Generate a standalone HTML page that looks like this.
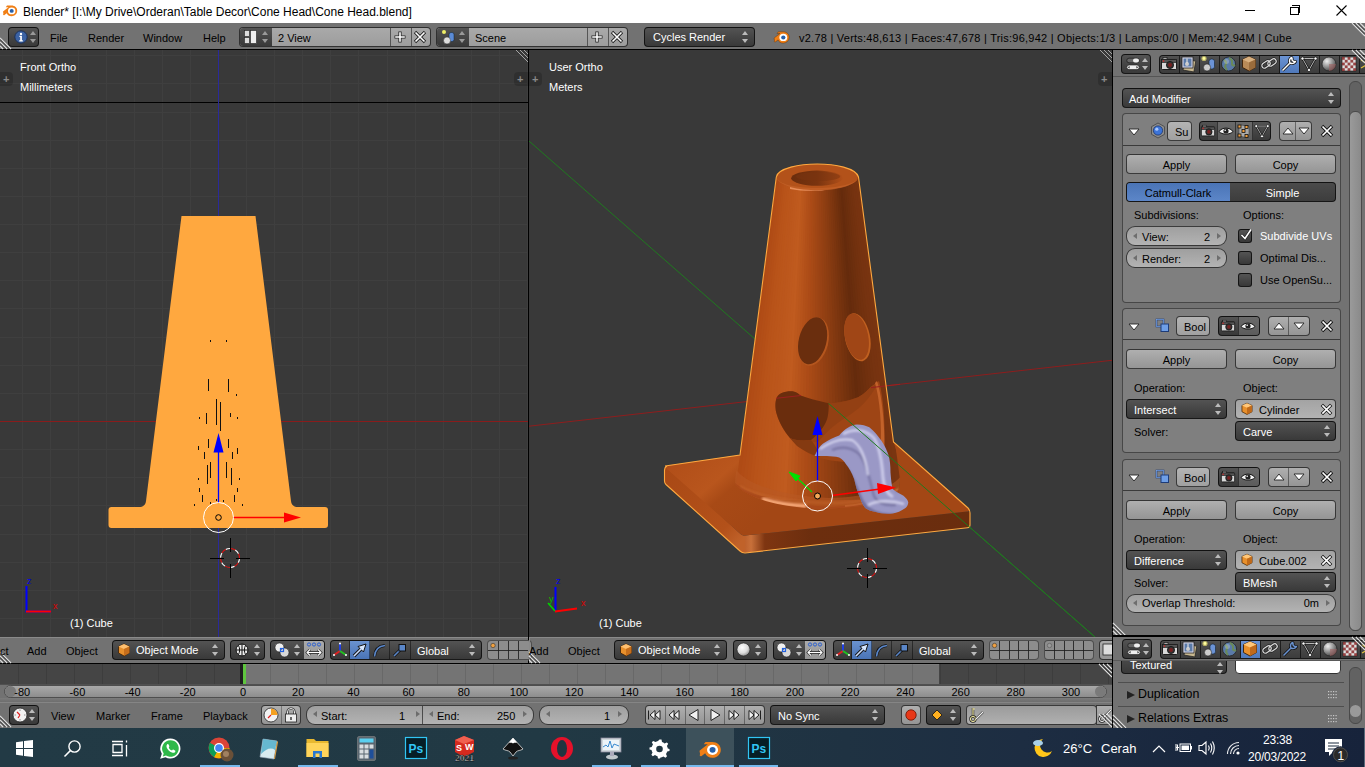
<!DOCTYPE html>
<html><head><meta charset="utf-8">
<style>
*{margin:0;padding:0;box-sizing:border-box}
html,body{width:1365px;height:767px;overflow:hidden;background:#393939;font-family:"Liberation Sans",sans-serif;font-size:11px;color:#000;line-height:1}
.a{position:absolute}
.t{position:absolute;white-space:nowrap;line-height:13px}
.w{color:#fff}
.hdr{position:absolute;background:#727272}
.reg{position:absolute;border:1px solid rgba(20,20,20,.75);border-radius:4px;background:linear-gradient(#afafaf,#959595);text-align:center;line-height:21px;white-space:nowrap}
.menu{position:absolute;border:1px solid rgba(0,0,0,.7);border-radius:4px;background:linear-gradient(#535353,#393939);color:#fff;line-height:19px;white-space:nowrap;padding-left:6px}
.num{position:absolute;border:1px solid rgba(20,20,20,.75);border-radius:9px;background:linear-gradient(#9f9f9f,#b3b3b3);line-height:21px;white-space:nowrap}
.txt{position:absolute;border:1px solid rgba(20,20,20,.75);border-radius:4px;background:linear-gradient(#9b9b9b,#b0b0b0);line-height:21px;white-space:nowrap}
.grp{position:absolute;border:1px solid rgba(0,0,0,.7);border-radius:4px;background:linear-gradient(#535353,#393939);overflow:hidden}
.box{position:absolute;border:1px solid rgba(25,25,25,.55);border-radius:4px;background:#7f7f7f}
.ud{position:absolute;width:7px;height:12px}
.ud:before{content:"";position:absolute;left:0;top:0;border-left:3.5px solid transparent;border-right:3.5px solid transparent;border-bottom:4px solid currentColor}
.ud:after{content:"";position:absolute;left:0;bottom:0;border-left:3.5px solid transparent;border-right:3.5px solid transparent;border-top:4px solid currentColor}
.lt{position:absolute;width:0;height:0;border-top:3.5px solid transparent;border-bottom:3.5px solid transparent;border-right:4px solid rgba(0,0,0,.35)}
.rt{position:absolute;width:0;height:0;border-top:3.5px solid transparent;border-bottom:3.5px solid transparent;border-left:4px solid rgba(0,0,0,.35)}
.sep{position:absolute;width:1px;background:rgba(0,0,0,.45)}
.cb{position:absolute;width:14px;height:14px;border:1px solid rgba(0,0,0,.7);border-radius:3px;background:linear-gradient(#545454,#383838)}
svg{position:absolute;overflow:visible}
</style></head><body>
<!-- title bar -->
<div class="a" style="left:0;top:0;width:1365px;height:23px;background:#fff"></div>
<svg style="left:2px;top:3px" width="16" height="14" viewBox="0 0 16 14">
<path d="M1 8.5 L6.5 4.2 L3.8 4.2 L5 2.6 L9.5 2.6 C12.8 2.6 15.2 4.8 15.2 7.8 C15.2 10.9 12.7 13.2 9.6 13.2 C7.2 13.2 5.4 11.9 4.8 10.2 L2.4 12 C1.6 12.6 0.6 11.5 1.4 10.8 Z" fill="#f07f16"/>
<ellipse cx="9.7" cy="7.9" rx="3.7" ry="3.4" fill="#fff"/><ellipse cx="9.7" cy="7.9" rx="2" ry="1.9" fill="#275fa8"/>
</svg>
<div class="t" style="left:23px;top:5px;font-size:12px;line-height:14px;color:#000">Blender* [I:\My Drive\Orderan\Table Decor\Cone Head\Cone Head.blend]</div>
<div class="a" style="left:1245px;top:10px;width:10px;height:1px;background:#000"></div>
<div class="a" style="left:1292px;top:5px;width:8px;height:8px;border:1px solid #000;border-left:none;border-bottom:none"></div>
<div class="a" style="left:1290px;top:7px;width:9px;height:8px;border:1px solid #000;background:#fff"></div>
<svg style="left:1336px;top:5px" width="11" height="11"><path d="M0.5 0.5L10.5 10.5M10.5 0.5L0.5 10.5" stroke="#000" stroke-width="1.1"/></svg>
<!-- info header -->
<div class="hdr" style="left:0;top:23px;width:1365px;height:26px"></div>
<div class="a" style="left:0;top:49px;width:1365px;height:1px;background:#000"></div>
<div class="grp" style="left:8px;top:27px;width:31px;height:20px"></div>
<svg style="left:14px;top:30px" width="14" height="14" viewBox="0 0 14 14"><circle cx="7" cy="7" r="6.2" fill="#3b62a3" stroke="#1c2f55" stroke-width="1"/><circle cx="7" cy="3.9" r="1.2" fill="#fff"/><path d="M5.4 5.8h2.5v4.5h1v1.2H5.2v-1.2h1v-3.3h-.8z" fill="#fff"/></svg>
<div class="ud" style="left:30px;top:31px;color:#9a9a9a"></div>
<div class="t" style="left:50px;top:32px">File</div>
<div class="t" style="left:88px;top:32px">Render</div>
<div class="t" style="left:143px;top:32px">Window</div>
<div class="t" style="left:203px;top:32px">Help</div>
<div class="grp" style="left:239px;top:27px;width:192px;height:20px;background:linear-gradient(#a9a9a9,#9d9d9d)">
 <div class="a" style="left:0;top:0;width:32px;height:18px;background:linear-gradient(#535353,#393939)"></div>
 <div class="a" style="left:150px;top:0;width:1px;height:18px;background:#555"></div>
 <div class="a" style="left:171px;top:0;width:1px;height:18px;background:#555"></div>
</div>
<svg style="left:244px;top:30px" width="13" height="14" viewBox="0 0 13 14"><rect x="0.5" y="0.5" width="5" height="6" fill="#ddd" stroke="#222" stroke-width=".6"/><rect x="0.5" y="7.5" width="5" height="6" fill="#ddd" stroke="#222" stroke-width=".6"/><rect x="6.5" y="0.5" width="6" height="13" fill="#eee" stroke="#222" stroke-width=".6"/></svg>
<div class="ud" style="left:262px;top:31px;color:#9a9a9a"></div>
<div class="t" style="left:278px;top:32px">2 View</div>
<svg style="left:393px;top:30px" width="14" height="14"><path d="M7 1.5V12.5M1.5 7H12.5" stroke="#222" stroke-width="3.2"/><path d="M7 2.2V11.8M2.2 7H11.8" stroke="#fff" stroke-width="1.6"/></svg>
<svg style="left:413px;top:30px" width="14" height="14"><path d="M2 2L12 12M12 2L2 12" stroke="#222" stroke-width="3.2"/><path d="M2.5 2.5L11.5 11.5M11.5 2.5L2.5 11.5" stroke="#fff" stroke-width="1.6"/></svg>
<div class="grp" style="left:436px;top:27px;width:192px;height:20px;background:linear-gradient(#a9a9a9,#9d9d9d)">
 <div class="a" style="left:0;top:0;width:32px;height:18px;background:linear-gradient(#535353,#393939)"></div>
 <div class="a" style="left:150px;top:0;width:1px;height:18px;background:#555"></div>
 <div class="a" style="left:171px;top:0;width:1px;height:18px;background:#555"></div>
</div>
<svg style="left:441px;top:29px" width="15" height="16" viewBox="0 0 15 16"><circle cx="3" cy="3" r="2" fill="#ee6"/><rect x="8" y="3.5" width="5" height="9" rx="2" fill="#5b8bd6" stroke="#123" stroke-width=".5"/><circle cx="6" cy="11.5" r="3.5" fill="#ddd" stroke="#333" stroke-width=".5"/></svg>
<div class="ud" style="left:459px;top:31px;color:#9a9a9a"></div>
<div class="t" style="left:475px;top:32px">Scene</div>
<svg style="left:590px;top:30px" width="14" height="14"><path d="M7 1.5V12.5M1.5 7H12.5" stroke="#222" stroke-width="3.2"/><path d="M7 2.2V11.8M2.2 7H11.8" stroke="#fff" stroke-width="1.6"/></svg>
<svg style="left:610px;top:30px" width="14" height="14"><path d="M2 2L12 12M12 2L2 12" stroke="#222" stroke-width="3.2"/><path d="M2.5 2.5L11.5 11.5M11.5 2.5L2.5 11.5" stroke="#fff" stroke-width="1.6"/></svg>
<div class="menu" style="left:644px;top:27px;width:111px;height:20px;padding-left:8px">Cycles Render<div class="ud" style="left:97px;top:3px;color:#bbb"></div></div>
<svg style="left:773px;top:29px" width="17" height="15" viewBox="0 0 16 14">
<path d="M1 8.5 L6.5 4.2 L3.8 4.2 L5 2.6 L9.5 2.6 C12.8 2.6 15.2 4.8 15.2 7.8 C15.2 10.9 12.7 13.2 9.6 13.2 C7.2 13.2 5.4 11.9 4.8 10.2 L2.4 12 C1.6 12.6 0.6 11.5 1.4 10.8 Z" fill="#f07f16" stroke="#5a2a00" stroke-width=".4"/>
<ellipse cx="9.7" cy="7.9" rx="3.7" ry="3.4" fill="#fff"/><ellipse cx="9.7" cy="7.9" rx="2" ry="1.9" fill="#275fa8"/>
</svg>
<div class="t" style="left:799px;top:32px;letter-spacing:.24px">v2.78 | Verts:48,613 | Faces:47,678 | Tris:96,942 | Objects:1/3 | Lamps:0/0 | Mem:42.94M | Cube</div>
<svg style="left:0;top:37px" width="13" height="12"><path d="M0 1L11 12M0 5L7 12M0 9L3 12" stroke="#ddd" stroke-width="1.2"/><path d="M0 2.5L9.5 12M0 6.5L5.5 12" stroke="#222" stroke-width=".8"/></svg>
<svg style="left:1352px;top:23px" width="13" height="13"><path d="M0 0L13 13M4 0L13 9M8 0L13 5" stroke="#ddd" stroke-width="1.2"/><path d="M1.5 0L13 11.5M5.5 0L13 7.5" stroke="#222" stroke-width=".8"/></svg>
<!-- left viewport -->
<div class="a" style="left:0;top:50px;width:528px;height:587px;overflow:hidden;background:#393939">
<svg style="left:0;top:-50px" width="528" height="637" viewBox="0 0 528 637">
<path d="M22.5 50V637M50.5 50V637M78.5 50V637M106.5 50V637M134.5 50V637M162.5 50V637M190.5 50V637M246.5 50V637M274.5 50V637M302.5 50V637M330.5 50V637M358.5 50V637M387.5 50V637M415.5 50V637M443.5 50V637M471.5 50V637M499.5 50V637M527.5 50V637M0 55.5H528M0 83.5H528M0 112.5H528M0 140.5H528M0 168.5H528M0 196.5H528M0 224.5H528M0 252.5H528M0 280.5H528M0 308.5H528M0 337.5H528M0 365.5H528M0 393.5H528M0 449.5H528M0 477.5H528M0 505.5H528M0 534.5H528M0 562.5H528M0 590.5H528M0 618.5H528" stroke="#3f3f3f" stroke-width="1" fill="none"/>
<path d="M0 102.5H528" stroke="#000" stroke-width="1.2"/>
<path d="M0 421.5H528" stroke="#8a1c1c" stroke-width="1"/>
<path d="M218.5 50V637" stroke="#2a2a9a" stroke-width="1"/>
<path d="M181.5 216H255.5L291 501C291.5 505 294 507 298 507H325C327 507 328 508 328 510V525C328 527 327 528 325 528H111.5C109.5 528 108.5 527 108.5 525V510C108.5 508 109.5 507 111.5 507H139C143 507 145.5 505 146 501Z" fill="#ffa83f"/>
<path d="M218.5 452V503" stroke="#0000ff" stroke-width="1.3"/>
<path d="M213.5 452.5H223.5L218.5 433Z" fill="#0000ff"/>
<path d="M233 517.5H285" stroke="#ff0000" stroke-width="1.3"/>
<path d="M284 512.5V522.5L301 517.5Z" fill="#ff0000"/>
<circle cx="218.5" cy="517.5" r="15" fill="none" stroke="#fff" stroke-width="1"/>
<circle cx="218.5" cy="517.5" r="2.8" fill="none" stroke="#000" stroke-width="1"/>
<g stroke="#111" stroke-width="1"><path d="M210.5 340v2M226.5 340v2M208.5 379v12M228.5 379v13M236.5 394v2M216.5 399v26M220.5 402v29M206.5 413v11M230.5 413v4M199.5 417v2M237.5 417v2M208.5 439v9M228.5 439v9M198.5 446v4M237.5 448v6M204.5 452v7M232.5 452v7M207.5 465v19M210.5 462v16M226.5 462v16M231.5 468v17M198.5 478v2M239.5 478v2M199.5 488v4M237.5 488v4M202.5 495v7M234.5 495v7M194.5 504v2M210.5 502v2M216.5 499v2M223.5 500v2M242.5 504v2"/></g>
<g>
<circle cx="230" cy="558" r="9.5" fill="none" stroke="#fff" stroke-width="1.1" stroke-dasharray="5 5"/>
<circle cx="230" cy="558" r="9.5" fill="none" stroke="#e01010" stroke-width="1.1" stroke-dasharray="5 5" stroke-dashoffset="5"/>
<path d="M210 558.5H224M236 558.5H250M230.5 538V552M230.5 564V578" stroke="#000" stroke-width="1"/>
</g>
<path d="M26.5 586V611.5H51" stroke="#0000ff" stroke-width="2" fill="none"/>
<path d="M26 611.5H51" stroke="#ff0000" stroke-width="2"/>
<text x="27" y="584" font-size="9" fill="#0000ee" font-family="Liberation Sans">z</text>
<text x="53" y="609" font-size="9" fill="#e00000" font-family="Liberation Sans">x</text>
<path d="M516 50L528 62M520 50L528 58M524 50L528 54" stroke="#fff" stroke-opacity=".55" stroke-width="1"/>
</svg>
<div class="a" style="left:514px;top:22px;width:14px;height:14px;background:rgba(0,0,0,.16);border-radius:4px 0 0 4px"></div>
<div class="t" style="left:517px;top:23px;color:#8a8a8a;font-size:11px;font-weight:bold">+</div>
<div class="a" style="left:0;top:22px;width:13px;height:14px;background:rgba(0,0,0,.16);border-radius:0 4px 4px 0"></div>
<div class="t" style="left:3px;top:23px;color:#8a8a8a;font-size:11px;font-weight:bold">+</div>
<div class="t w" style="left:20px;top:11px">Front Ortho</div>
<div class="t w" style="left:20px;top:31px">Millimeters</div>
<div class="t w" style="left:70px;top:567px">(1) Cube</div>
</div>
<div class="a" style="left:528px;top:50px;width:1px;height:587px;background:#000"></div>
<!-- right viewport -->
<div class="a" style="left:529px;top:50px;width:583px;height:587px;overflow:hidden;background:#393939">
<svg style="left:-529px;top:-50px" width="1112" height="637" viewBox="0 0 1112 637">
<defs>
<linearGradient id="bt" gradientUnits="userSpaceOnUse" x1="690" y1="440" x2="760" y2="520">
<stop offset="0" stop-color="#b04d18"/><stop offset=".45" stop-color="#b9561d"/><stop offset=".6" stop-color="#a84a16"/><stop offset="1" stop-color="#a34715"/>
</linearGradient>
<linearGradient id="bf" gradientUnits="userSpaceOnUse" x1="742" y1="0" x2="970" y2="0">
<stop offset="0" stop-color="#b85a26"/><stop offset=".04" stop-color="#c8703a"/><stop offset=".1" stop-color="#7e3511"/><stop offset=".3" stop-color="#6c2e0e"/><stop offset="1" stop-color="#6a2d0e"/>
</linearGradient>
<linearGradient id="bl" gradientUnits="userSpaceOnUse" x1="665" y1="470" x2="742" y2="540">
<stop offset="0" stop-color="#a94915"/><stop offset=".8" stop-color="#b3511a"/><stop offset="1" stop-color="#c0622a"/>
</linearGradient>
<linearGradient id="hole" gradientUnits="userSpaceOnUse" x1="792" y1="0" x2="843" y2="0">
<stop offset="0" stop-color="#6a2d0d"/><stop offset=".5" stop-color="#7a340f"/><stop offset="1" stop-color="#b25019"/>
</linearGradient>
<linearGradient id="tg" gradientUnits="userSpaceOnUse" x1="820" y1="425" x2="905" y2="515">
<stop offset="0" stop-color="#a6a4d4"/><stop offset=".5" stop-color="#9390c2"/><stop offset="1" stop-color="#8784b6"/>
</linearGradient>
<filter id="bl1" x="-20%" y="-20%" width="140%" height="140%"><feGaussianBlur stdDeviation="1.1"/></filter>
<clipPath id="cone"><path d="M776.3 177L740 455C737 465 735 475 735 484C745 496 770 505 805 508C830 510 865 508 895 498C902 490 902 465 893.5 442L858.5 177Z"/></clipPath>
</defs>
<path d="M529 426.2L1112 360.3" stroke="#8e1d1d" stroke-width="1"/>
<path d="M529 141L1095 637" stroke="#1f7a1f" stroke-width="1"/>
<!-- base slab -->

<path d="M667 466C665 467 664.5 468 664.5 470V481C664.5 482.5 665 483.5 666 484.5L740 551C741.5 552.5 743 553 745 552.8L745 535.5C743 535.7 741.5 535 740.5 534Z" fill="url(#bl)"/>
<path d="M745 535.5L967 511.5C969 511.3 970 512 970 514V525C970 526.5 969 527.3 967.5 527.5L745 552.8Z" fill="url(#bf)"/>
<path d="M668 465.5L740 455L893.5 442L968 508C970 510 970 511 967 511.5L745 535.5C743 535.7 741.5 535 740.5 534L667 469C666 468 666.5 466 668 465.5Z" fill="url(#bt)"/>

<!-- cone body -->
<g clip-path="url(#cone)">
<path d="M776.30 177L779.51 177L739.10 500L734.12 500Z" fill="rgb(175, 75, 21)"/>
<path d="M778.01 177L781.22 177L742.58 500L737.60 500Z" fill="rgb(177, 76, 22)"/>
<path d="M779.72 177L782.94 177L746.06 500L741.08 500Z" fill="rgb(178, 78, 23)"/>
<path d="M781.44 177L784.65 177L749.54 500L744.56 500Z" fill="rgb(180, 79, 23)"/>
<path d="M783.15 177L786.36 177L753.02 500L748.04 500Z" fill="rgb(182, 81, 24)"/>
<path d="M784.86 177L788.07 177L756.50 500L751.52 500Z" fill="rgb(184, 83, 25)"/>
<path d="M786.57 177L789.79 177L759.98 500L755.00 500Z" fill="rgb(185, 84, 26)"/>
<path d="M788.29 177L791.50 177L763.46 500L758.48 500Z" fill="rgb(186, 85, 26)"/>
<path d="M790.00 177L793.21 177L766.94 500L761.96 500Z" fill="rgb(187, 86, 27)"/>
<path d="M791.71 177L794.92 177L770.42 500L765.44 500Z" fill="rgb(187, 86, 28)"/>
<path d="M793.42 177L796.64 177L773.90 500L768.92 500Z" fill="rgb(188, 87, 28)"/>
<path d="M795.14 177L798.35 177L777.38 500L772.40 500Z" fill="rgb(189, 88, 29)"/>
<path d="M796.85 177L800.06 177L780.86 500L775.88 500Z" fill="rgb(190, 89, 30)"/>
<path d="M798.56 177L801.77 177L784.34 500L779.36 500Z" fill="rgb(191, 90, 30)"/>
<path d="M800.27 177L803.49 177L787.82 500L782.84 500Z" fill="rgb(192, 91, 31)"/>
<path d="M801.99 177L805.20 177L791.30 500L786.32 500Z" fill="rgb(188, 88, 29)"/>
<path d="M803.70 177L806.91 177L794.78 500L789.80 500Z" fill="rgb(185, 86, 28)"/>
<path d="M805.41 177L808.62 177L798.26 500L793.28 500Z" fill="rgb(182, 83, 27)"/>
<path d="M807.12 177L810.34 177L801.74 500L796.76 500Z" fill="rgb(178, 80, 25)"/>
<path d="M808.84 177L812.05 177L805.22 500L800.24 500Z" fill="rgb(175, 78, 24)"/>
<path d="M810.55 177L813.76 177L808.70 500L803.72 500Z" fill="rgb(172, 75, 23)"/>
<path d="M812.26 177L815.48 177L812.18 500L807.20 500Z" fill="rgb(168, 74, 22)"/>
<path d="M813.98 177L817.19 177L815.66 500L810.68 500Z" fill="rgb(164, 72, 21)"/>
<path d="M815.69 177L818.90 177L819.14 500L814.16 500Z" fill="rgb(160, 70, 21)"/>
<path d="M817.40 177L820.61 177L822.62 500L817.64 500Z" fill="rgb(156, 68, 20)"/>
<path d="M819.11 177L822.32 177L826.10 500L821.12 500Z" fill="rgb(152, 66, 20)"/>
<path d="M820.82 177L824.04 177L829.58 500L824.60 500Z" fill="rgb(148, 64, 19)"/>
<path d="M822.54 177L825.75 177L833.06 500L828.08 500Z" fill="rgb(144, 63, 18)"/>
<path d="M824.25 177L827.46 177L836.54 500L831.56 500Z" fill="rgb(140, 61, 18)"/>
<path d="M825.96 177L829.17 177L840.02 500L835.04 500Z" fill="rgb(136, 59, 17)"/>
<path d="M827.67 177L830.89 177L843.50 500L838.52 500Z" fill="rgb(131, 57, 16)"/>
<path d="M829.39 177L832.60 177L846.98 500L842.00 500Z" fill="rgb(127, 55, 16)"/>
<path d="M831.10 177L834.31 177L850.46 500L845.48 500Z" fill="rgb(123, 53, 15)"/>
<path d="M832.81 177L836.02 177L853.94 500L848.96 500Z" fill="rgb(118, 51, 14)"/>
<path d="M834.52 177L837.74 177L857.42 500L852.44 500Z" fill="rgb(114, 49, 14)"/>
<path d="M836.24 177L839.45 177L860.90 500L855.92 500Z" fill="rgb(109, 47, 13)"/>
<path d="M837.95 177L841.16 177L864.38 500L859.40 500Z" fill="rgb(105, 45, 13)"/>
<path d="M839.66 177L842.88 177L867.86 500L862.88 500Z" fill="rgb(101, 43, 12)"/>
<path d="M841.38 177L844.59 177L871.34 500L866.36 500Z" fill="rgb(104, 44, 13)"/>
<path d="M843.09 177L846.30 177L874.82 500L869.84 500Z" fill="rgb(106, 46, 13)"/>
<path d="M844.80 177L848.01 177L878.30 500L873.32 500Z" fill="rgb(109, 47, 14)"/>
<path d="M846.51 177L849.73 177L881.78 500L876.80 500Z" fill="rgb(112, 48, 14)"/>
<path d="M848.23 177L851.44 177L885.26 500L880.28 500Z" fill="rgb(114, 49, 15)"/>
<path d="M849.94 177L853.15 177L888.74 500L883.76 500Z" fill="rgb(116, 50, 15)"/>
<path d="M851.65 177L854.86 177L892.22 500L887.24 500Z" fill="rgb(118, 51, 16)"/>
<path d="M853.36 177L856.58 177L895.70 500L890.72 500Z" fill="rgb(119, 51, 16)"/>
<path d="M855.08 177L858.29 177L899.18 500L894.20 500Z" fill="rgb(120, 52, 16)"/>
<path d="M856.79 177L860.00 177L902.66 500L897.68 500Z" fill="rgb(121, 53, 17)"/>
<path d="M735 468C745 485 785 496 830 498C865 497 890 490 902 475L905 515L735 515Z" fill="#b85a24" opacity=".55"/>
<path d="M735 483C750 496 790 505 830 507C862 506 888 499 902 488L902 515L735 515Z" fill="#a9491a"/>
<path d="M740 486C755 496 790 502 830 503C860 503 885 497 900 488" stroke="#c86a30" stroke-width="2" fill="none" opacity=".6" filter="url(#bl1)"/>
<path d="M762 499C775 503 792 505.5 806 506" stroke="#f6a877" stroke-width="4" fill="none" filter="url(#bl1)"/>
<path d="M845 506C868 504 886 498 898 489" stroke="#c86a34" stroke-width="2" fill="none" opacity=".6"/>
</g>
<!-- top -->
<ellipse cx="817.2" cy="177" rx="41" ry="13" fill="#b3521a"/>
<path d="M776.3 177C778 186 800 190.5 817.2 190.5C835 190.5 856 186 858.5 177C858 183 840 188 817 188C795 188 778 184 776.3 177Z" fill="#c8652c" opacity=".6"/>
<path d="M790 187C800 190 815 190.5 825 190C815 191.5 800 191 790 189Z" fill="#f09a68" opacity=".8"/>
<ellipse cx="817" cy="178.2" rx="25.8" ry="7.6" fill="url(#hole)"/>
<ellipse cx="818" cy="176.5" rx="22" ry="4.5" fill="#7a340f" opacity=".5"/>
<!-- eyes -->
<ellipse cx="813.5" cy="341.6" rx="14.7" ry="24.7" transform="rotate(14 813.5 341.6)" fill="#b4561e"/>
<ellipse cx="812.6" cy="340.8" rx="13.8" ry="24" transform="rotate(14 812.6 340.8)" fill="#6a2e0e"/>
<ellipse cx="857.5" cy="337.3" rx="12.5" ry="24.4" transform="rotate(-12 857.5 337.3)" fill="#c06020"/>
<ellipse cx="856.6" cy="336.6" rx="11.6" ry="23.6" transform="rotate(-12 856.6 336.6)" fill="#a04616"/>
<!-- mouth -->
<path d="M776.5 398.5C778 393 785 391 793.5 391.4C797 392 799 394 800.5 395.5C808 398 817 400.8 828.6 403.2C836 403.5 848 401 858 397.3C864 394 868 390 870.9 386.7L879 380.9C883 395 886 425 884 450C878 460 860 462 845 462C830 461 822 459 814.6 456.5C805 451 797 446 793.5 441.9C786 434 780 425 777 415C775 409 775 402 776.5 398.5Z" fill="#9e4515"/>
<path d="M828.6 403.2C836 403.5 848 401 858 397.3C864 394 868 390 879 380.9C870 400 858 410 845 418C835 424 826 432 818 442L795 443C788 435 782 425 778 415Z" fill="#8a3c12" opacity=".55"/>
<path d="M776.5 398.5C778 393 785 391 793.5 391.4C797 392 799 394 800.5 395.5C808 398 817 400.8 828.6 403.2C829 410 828 418 826 422C822 430 816 436 811 440C800 441 794 440 790 438C784 431 779 422 777 415C775 409 775 402 776.5 398.5Z" fill="#6a2d0d"/>
<path d="M790 438C797 441 805 441 811 440C816 446 818 451 820 457C812 455 804 451 797 446Z" fill="#843a11"/>
<path d="M877 381C881 392 885 420 884.5 450L880.5 452C882 425 880 400 875 383Z" fill="#c2622a"/>
<!-- visible line segments over cone -->
<path d="M776 398.3L801 395.5" stroke="#9a2020" stroke-width="1"/>
<path d="M871 387.6L900 384.3" stroke="#9a2020" stroke-width="1"/>
<!-- outline -->
<path d="M665 466L740 455L776.3 177C778 168 800 164 817.2 164C835 164 856 168 858.5 177L893.5 442L968 508C970 510 970 511 970 513V525C970 527 969 527.5 967.5 527.7L745 553C743 553 741.5 552.5 740 551L666 484.5C665 483.5 664.5 482.5 664.5 481V470C664.5 468 665 467 667 466Z" fill="none" stroke="#ffa83f" stroke-width="1.1"/>
<!-- tongue -->
<clipPath id="tc"><path d="M814.6 456C817 450 820 446 822.8 443.7C829 440 834 437 839.2 435.5C842 432 845 429.5 847.4 428C851 426 854 424.8 857 424.6C862 424.6 866 425.8 869.3 427.3C874 431 878 436 881.6 441C885 446 887 451 888.4 454.7C890 460 890.5 466 890.5 472.5C891 479 891.5 484 892.6 488.9C896 492 900 493.5 903.5 495.7C906 498 908 500 908.3 502.5C908 505 907 507 905.5 508C901 511 897 513 892.6 513.5C886 514 880 513.5 876 512.1C871 511 868 510 865.2 508C862 504 861 500 859.7 497C857 491 855.5 485 854.2 479.3C852 473 849 468 846 464.2C844 461 842 459 839.2 457.4C835 456.5 831 456.2 826.9 456C822 456 818 456 814.6 456Z"/></clipPath>
<path d="M814.6 456C817 450 820 446 822.8 443.7C829 440 834 437 839.2 435.5C842 432 845 429.5 847.4 428C851 426 854 424.8 857 424.6C862 424.6 866 425.8 869.3 427.3C874 431 878 436 881.6 441C885 446 887 451 888.4 454.7C890 460 890.5 466 890.5 472.5C891 479 891.5 484 892.6 488.9C896 492 900 493.5 903.5 495.7C906 498 908 500 908.3 502.5C908 505 907 507 905.5 508C901 511 897 513 892.6 513.5C886 514 880 513.5 876 512.1C871 511 868 510 865.2 508C862 504 861 500 859.7 497C857 491 855.5 485 854.2 479.3C852 473 849 468 846 464.2C844 461 842 459 839.2 457.4C835 456.5 831 456.2 826.9 456C822 456 818 456 814.6 456Z" fill="#9a98c6"/>
<g clip-path="url(#tc)">
<g filter="url(#bl1)">
<path d="M812 462C822 460 835 460 843 466C852 475 855 490 862 503C868 512 880 517 895 516" stroke="#5f5c8a" stroke-width="5" fill="none" opacity=".7"/>
<path d="M893 440C896 460 895 480 898 492" stroke="#6a6896" stroke-width="4" fill="none" opacity=".6"/>
<path d="M832 450C842 446 852 447 860 455C868 466 870 482 874 496C877 503 884 506 896 505" stroke="#6c6a98" stroke-width="2.2" fill="none" opacity=".75"/>
<path d="M820 449C830 442 842 438 852 440C862 446 866 460 868 475" stroke="#e6e6fa" stroke-width="2" fill="none" opacity=".85"/>
<path d="M843 434C855 428 866 430 874 438C880 448 882 462 883 478C884 488 887 494 893 497" stroke="#d8d8f2" stroke-width="3" fill="none" opacity=".8"/>
<path d="M868 505C878 500 892 500 904 504" stroke="#e4e4f8" stroke-width="2.2" fill="none" opacity=".8"/>
</g>
</g>
<path d="M828.5 403.4L1095 637" stroke="#1f7a1f" stroke-width="1"/>
<!-- manipulator -->
<path d="M817.5 435V481" stroke="#0000ff" stroke-width="1.3"/>
<path d="M812.5 435H822.5L817.5 416Z" fill="#0000ff"/>
<path d="M812 492L797 478" stroke="#00e000" stroke-width="1.2"/>
<path d="M789 472L800 476L796 481Z" fill="#00e000" stroke="#00e000" stroke-width="1"/>
<path d="M832 495.5L880 489" stroke="#ff0000" stroke-width="1.3"/>
<path d="M877 483L878 494L896 487.5Z" fill="#ff0000"/>
<circle cx="817.5" cy="496" r="15" fill="none" stroke="#fff" stroke-width="1"/>
<circle cx="817.5" cy="496" r="3" fill="#f3a858" stroke="#000" stroke-width="1"/>
<!-- cursor -->
<circle cx="867" cy="568" r="9.5" fill="none" stroke="#fff" stroke-width="1.1" stroke-dasharray="5 5"/>
<circle cx="867" cy="568" r="9.5" fill="none" stroke="#e01010" stroke-width="1.1" stroke-dasharray="5 5" stroke-dashoffset="5"/>
<path d="M847 568.5H861M873 568.5H887M867.5 548V562M867.5 574V588" stroke="#000" stroke-width="1"/>
<!-- gizmo -->
<path d="M555.5 587V611" stroke="#0000ff" stroke-width="2"/>
<path d="M555 611L548 603" stroke="#00d000" stroke-width="1.6"/>
<path d="M555 611.5L577 608.5" stroke="#ff0000" stroke-width="2"/>
<text x="556" y="584" font-size="9" fill="#0000ee" font-family="Liberation Sans">z</text>
<text x="549" y="602" font-size="9" fill="#00c000" font-family="Liberation Sans">y</text>
<text x="581" y="606" font-size="9" fill="#e00000" font-family="Liberation Sans">x</text>
<path d="M1100 50L1112 62M1104 50L1112 58M1108 50L1112 54" stroke="#fff" stroke-opacity=".55" stroke-width="1"/>
</svg>
<div class="a" style="left:0;top:22px;width:13px;height:14px;background:rgba(0,0,0,.16);border-radius:0 4px 4px 0"></div>
<div class="t" style="left:3px;top:23px;color:#8a8a8a;font-size:11px;font-weight:bold">+</div>
<div class="a" style="left:569px;top:22px;width:14px;height:14px;background:rgba(0,0,0,.16);border-radius:4px 0 0 4px"></div>
<div class="t" style="left:572px;top:23px;color:#8a8a8a;font-size:11px;font-weight:bold">+</div>
<div class="t w" style="left:20px;top:11px">User Ortho</div>
<div class="t w" style="left:20px;top:31px">Meters</div>
<div class="t w" style="left:70px;top:567px">(1) Cube</div>
</div>
<div class="a" style="left:1112px;top:50px;width:1px;height:587px;background:#000"></div>
<!-- 3D headers -->
<div class="hdr" style="left:0;top:637px;width:1112px;height:26px;background:#727272;border-top:1px solid #8a8a8a"></div>
<div class="a" style="left:528px;top:637px;width:1px;height:26px;background:#000"></div>
<div class="a" style="left:0;top:663px;width:1113px;height:1px;background:#000"></div>
<svg style="left:0;top:651px" width="13" height="12"><path d="M0 1L11 12M0 5L7 12M0 9L3 12" stroke="#ddd" stroke-width="1.2"/><path d="M0 2.5L9.5 12M0 6.5L5.5 12" stroke="#222" stroke-width=".8"/></svg>
<div class="t" style="left:0;top:645px">ct</div>
<div class="t" style="left:27px;top:645px">Add</div>
<div class="t" style="left:66px;top:645px">Object</div>
<div class="menu" style="left:112px;top:640px;width:113px;height:20px;padding-left:23px">Object Mode<div class="ud" style="left:99px;top:3px;color:#bbb"></div></div>
<svg style="left:117px;top:643px" width="14" height="14" viewBox="0 0 14 14"><path d="M7 1L12.5 3.5V10L7 13L1.5 10V3.5Z" fill="#e8902c" stroke="#3a1e05" stroke-width=".8"/><path d="M1.5 3.5L7 6L12.5 3.5L7 1Z" fill="#ffc070"/><path d="M7 6V13L12.5 10V3.5Z" fill="#c66e1c"/></svg>
<div class="grp" style="left:230px;top:640px;width:35px;height:20px"></div>
<svg style="left:235px;top:643px" width="14" height="14" viewBox="0 0 14 14"><circle cx="7" cy="7" r="6" fill="#eee" stroke="#111" stroke-width="1"/><path d="M1 7H13M7 1V13M3.5 2.5C5 5 5 9 3.5 11.5M10.5 2.5C9 5 9 9 10.5 11.5" stroke="#111" stroke-width="1" fill="none"/></svg>
<div class="ud" style="left:254px;top:644px;color:#bbb"></div>
<div class="grp" style="left:270px;top:640px;width:55px;height:20px"><div class="a" style="left:33px;top:0;width:21px;height:18px;background:linear-gradient(#ababab,#959595)"></div></div>
<svg style="left:274px;top:642px" width="16" height="16" viewBox="0 0 16 16"><circle cx="5.5" cy="5.5" r="4.5" fill="#f0f0f0" stroke="#222" stroke-width=".6"/><circle cx="10.5" cy="10.5" r="4.5" fill="#d8d8d8" stroke="#222" stroke-width=".6"/><rect x="6.5" y="6.5" width="3" height="3" fill="none" stroke="#2060e0" stroke-width="1.2"/></svg>
<div class="ud" style="left:294px;top:644px;color:#bbb"></div>
<svg style="left:305px;top:642px" width="18" height="16" viewBox="0 0 18 16"><circle cx="4" cy="2.5" r="1.6" fill="none" stroke="#2a5fd0" stroke-width="1"/><circle cx="9" cy="2.5" r="1.6" fill="none" stroke="#2a5fd0" stroke-width="1"/><circle cx="14" cy="2.5" r="1.6" fill="none" stroke="#2a5fd0" stroke-width="1"/><path d="M2 10.5H16M5 7.5L2 10.5L5 13.5M13 7.5L16 10.5L13 13.5" stroke="#222" stroke-width="2.4" fill="none"/><path d="M2 10.5H16M5 7.5L2 10.5L5 13.5M13 7.5L16 10.5L13 13.5" stroke="#fff" stroke-width="1.1" fill="none"/></svg>
<div class="grp" style="left:330px;top:640px;width:152px;height:20px">
 <div class="a" style="left:19px;top:0;width:20px;height:18px;background:linear-gradient(#6a92d0,#4a74b6)"></div>
 <div class="sep" style="left:18px;top:0;height:18px"></div><div class="sep" style="left:38px;top:0;height:18px"></div><div class="sep" style="left:58px;top:0;height:18px"></div><div class="sep" style="left:79px;top:0;height:18px"></div>
 <div class="t w" style="left:86px;top:4px">Global</div><div class="ud" style="left:138px;top:3px;color:#bbb"></div>
</div>
<svg style="left:332px;top:642px" width="16" height="16" viewBox="0 0 16 16"><path d="M8 9V1" stroke="#2040e0" stroke-width="2"/><path d="M8 9L2 13" stroke="#e02020" stroke-width="2"/><path d="M8 9L14 13" stroke="#20c020" stroke-width="2"/><circle cx="8" cy="1.5" r="1" fill="#fff"/><circle cx="2" cy="13" r="1" fill="#fff"/><circle cx="14" cy="13" r="1" fill="#fff"/></svg>
<svg style="left:352px;top:643px" width="15" height="15" viewBox="0 0 15 15"><path d="M2 13L10 5" stroke="#111" stroke-width="3.4"/><path d="M14 1L6 3.5L11.5 9Z" fill="#d8e8ff" stroke="#111" stroke-width="1"/><path d="M2 13L10 5" stroke="#cfe0ff" stroke-width="1.6"/></svg>
<svg style="left:372px;top:643px" width="15" height="15" viewBox="0 0 15 15"><path d="M2.5 13.5C3 7 7 3 13 2.5" stroke="#111" stroke-width="3" fill="none"/><path d="M2.5 13.5C3 7 7 3 13 2.5" stroke="#5a86c8" stroke-width="1.6" fill="none"/></svg>
<svg style="left:392px;top:643px" width="15" height="15" viewBox="0 0 15 15"><path d="M2 13L8 7" stroke="#111" stroke-width="3"/><path d="M2 13L8 7" stroke="#5a86c8" stroke-width="1.6"/><rect x="7" y="1.5" width="6.5" height="6.5" fill="#5a86c8" stroke="#111" stroke-width="1"/></svg>
<div class="grp" style="left:487px;top:640px;width:45px;height:20px;background:#8d8d8d;border-color:rgba(0,0,0,.45)"></div>
<svg style="left:488px;top:641px" width="40" height="18"><g stroke="#1e1e1e" stroke-opacity=".85" stroke-width="1"><path d="M10.5 0V18M20.5 0V18M30.5 0V18M0 9.5H40"/></g><circle cx="5" cy="4.5" r="2.2" fill="#f0a040" stroke="#333" stroke-width=".6"/></svg>
<!-- right header -->
<div class="a" style="left:529px;top:638px;width:1px;height:25px;background:#8a8a8a"></div>
<svg style="left:529px;top:651px" width="13" height="12"><path d="M0 1L11 12M0 5L7 12M0 9L3 12" stroke="#ddd" stroke-width="1.2"/><path d="M0 2.5L9.5 12M0 6.5L5.5 12" stroke="#222" stroke-width=".8"/></svg>
<div class="t" style="left:529px;top:645px">Add</div>
<div class="t" style="left:568px;top:645px">Object</div>
<div class="menu" style="left:614px;top:640px;width:113px;height:20px;padding-left:23px">Object Mode<div class="ud" style="left:99px;top:3px;color:#bbb"></div></div>
<svg style="left:619px;top:643px" width="14" height="14" viewBox="0 0 14 14"><path d="M7 1L12.5 3.5V10L7 13L1.5 10V3.5Z" fill="#e8902c" stroke="#3a1e05" stroke-width=".8"/><path d="M1.5 3.5L7 6L12.5 3.5L7 1Z" fill="#ffc070"/><path d="M7 6V13L12.5 10V3.5Z" fill="#c66e1c"/></svg>
<div class="grp" style="left:733px;top:640px;width:34px;height:20px"></div>
<svg style="left:736px;top:642px" width="15" height="15"><defs><radialGradient id="sph" cx=".4" cy=".35" r=".7"><stop offset="0" stop-color="#fff"/><stop offset=".6" stop-color="#ddd"/><stop offset="1" stop-color="#888"/></radialGradient></defs><circle cx="7.5" cy="7.5" r="6.5" fill="url(#sph)" stroke="#222" stroke-width=".6"/></svg>
<div class="ud" style="left:755px;top:644px;color:#bbb"></div>
<div class="grp" style="left:773px;top:640px;width:53px;height:20px"><div class="a" style="left:31px;top:0;width:21px;height:18px;background:linear-gradient(#ababab,#959595)"></div></div>
<svg style="left:776px;top:642px" width="16" height="16" viewBox="0 0 16 16"><circle cx="5.5" cy="5.5" r="4.5" fill="#f0f0f0" stroke="#222" stroke-width=".6"/><circle cx="10.5" cy="10.5" r="4.5" fill="#d8d8d8" stroke="#222" stroke-width=".6"/><rect x="6.5" y="6.5" width="3" height="3" fill="none" stroke="#2060e0" stroke-width="1.2"/></svg>
<div class="ud" style="left:796px;top:644px;color:#bbb"></div>
<svg style="left:806px;top:642px" width="18" height="16" viewBox="0 0 18 16"><circle cx="4" cy="2.5" r="1.6" fill="none" stroke="#2a5fd0" stroke-width="1"/><circle cx="9" cy="2.5" r="1.6" fill="none" stroke="#2a5fd0" stroke-width="1"/><circle cx="14" cy="2.5" r="1.6" fill="none" stroke="#2a5fd0" stroke-width="1"/><path d="M2 10.5H16M5 7.5L2 10.5L5 13.5M13 7.5L16 10.5L13 13.5" stroke="#222" stroke-width="2.4" fill="none"/><path d="M2 10.5H16M5 7.5L2 10.5L5 13.5M13 7.5L16 10.5L13 13.5" stroke="#fff" stroke-width="1.1" fill="none"/></svg>
<div class="grp" style="left:833px;top:640px;width:151px;height:20px">
 <div class="a" style="left:18px;top:0;width:20px;height:18px;background:linear-gradient(#6a92d0,#4a74b6)"></div>
 <div class="sep" style="left:17px;top:0;height:18px"></div><div class="sep" style="left:37px;top:0;height:18px"></div><div class="sep" style="left:57px;top:0;height:18px"></div><div class="sep" style="left:78px;top:0;height:18px"></div>
 <div class="t w" style="left:85px;top:4px">Global</div><div class="ud" style="left:137px;top:3px;color:#bbb"></div>
</div>
<svg style="left:835px;top:642px" width="16" height="16" viewBox="0 0 16 16"><path d="M8 9V1" stroke="#2040e0" stroke-width="2"/><path d="M8 9L2 13" stroke="#e02020" stroke-width="2"/><path d="M8 9L14 13" stroke="#20c020" stroke-width="2"/><circle cx="8" cy="1.5" r="1" fill="#fff"/><circle cx="2" cy="13" r="1" fill="#fff"/><circle cx="14" cy="13" r="1" fill="#fff"/></svg>
<svg style="left:854px;top:643px" width="15" height="15" viewBox="0 0 15 15"><path d="M2 13L10 5" stroke="#111" stroke-width="3.4"/><path d="M14 1L6 3.5L11.5 9Z" fill="#d8e8ff" stroke="#111" stroke-width="1"/><path d="M2 13L10 5" stroke="#cfe0ff" stroke-width="1.6"/></svg>
<svg style="left:874px;top:643px" width="15" height="15" viewBox="0 0 15 15"><path d="M2.5 13.5C3 7 7 3 13 2.5" stroke="#111" stroke-width="3" fill="none"/><path d="M2.5 13.5C3 7 7 3 13 2.5" stroke="#5a86c8" stroke-width="1.6" fill="none"/></svg>
<svg style="left:894px;top:643px" width="15" height="15" viewBox="0 0 15 15"><path d="M2 13L8 7" stroke="#111" stroke-width="3"/><path d="M2 13L8 7" stroke="#5a86c8" stroke-width="1.6"/><rect x="7" y="1.5" width="6.5" height="6.5" fill="#5a86c8" stroke="#111" stroke-width="1"/></svg>
<div class="grp" style="left:989px;top:640px;width:50px;height:20px;background:#8d8d8d;border-color:rgba(0,0,0,.45)"></div>
<svg style="left:990px;top:641px" width="48" height="18"><g stroke="#1e1e1e" stroke-opacity=".85" stroke-width="1"><path d="M9.5 0V18M19.5 0V18M28.5 0V18M38.5 0V18M0 9.5H48"/></g><circle cx="4.5" cy="4.5" r="2.2" fill="#f0a040" stroke="#333" stroke-width=".6"/></svg>
<div class="grp" style="left:1044px;top:640px;width:50px;height:20px;background:#8d8d8d;border-color:rgba(0,0,0,.45)"></div>
<svg style="left:1045px;top:641px" width="48" height="18"><g stroke="#1e1e1e" stroke-opacity=".85" stroke-width="1"><path d="M9.5 0V18M19.5 0V18M28.5 0V18M38.5 0V18M0 9.5H48"/></g><circle cx="4.5" cy="4.5" r="2.2" fill="#9a9a9a" stroke="#555" stroke-width=".6"/></svg>
<div class="grp" style="left:1099px;top:640px;width:20px;height:20px;background:linear-gradient(#ababab,#959595)"></div>
<svg style="left:1102px;top:643px" width="10" height="14"><rect x="1" y="1" width="12" height="11" fill="#ddd" stroke="#222" stroke-width=".8"/></svg>
<!-- timeline -->
<div class="a" style="left:0;top:664px;width:1112px;height:38px;background:#727272"></div>
<div class="a" style="left:0;top:664px;width:1112px;height:21px;background:#454545"></div>
<div class="a" style="left:243px;top:664px;width:696px;height:21px;background:#747474;border-top:1px solid #7c7c7c"></div>
<svg style="left:0;top:0" width="1112" height="700"><path d="M18.5 664V685M46.5 664V685M74.5 664V685M102.5 664V685M130.5 664V685M158.5 664V685M186.5 664V685M214.5 664V685M242.5 664V685M270.5 664V685M298.5 664V685M326.5 664V685M354.5 664V685M382.5 664V685M410.5 664V685M437.5 664V685M465.5 664V685M493.5 664V685M521.5 664V685M549.5 664V685M577.5 664V685M605.5 664V685M633.5 664V685M661.5 664V685M689.5 664V685M717.5 664V685M745.5 664V685M773.5 664V685M801.5 664V685M828.5 664V685M856.5 664V685M884.5 664V685M912.5 664V685M940.5 664V685M968.5 664V685M996.5 664V685M1024.5 664V685M1052.5 664V685M1080.5 664V685M1108.5 664V685" stroke="#000" stroke-opacity=".1" stroke-width="1"/></svg>
<div class="a" style="left:240px;top:664px;width:3px;height:21px;background:#1e1e1e"></div>
<div class="a" style="left:243px;top:664px;width:3px;height:21px;background:#5fc63f"></div>
<div class="a" style="left:0;top:684px;width:1112px;height:1px;background:#505050"></div>
<div class="a" style="left:4px;top:685px;width:1103px;height:13px;border-radius:7px;background:linear-gradient(#a9a9a9,#8d8d8d);border:1px solid #4e4e4e"></div>
<div class="a" style="left:5px;top:686px;width:11px;height:11px;border-radius:6px;background:#7a7a7a"></div>
<div class="a" style="left:1095px;top:686px;width:11px;height:11px;border-radius:6px;background:#7a7a7a"></div>
<div class="t" style="left:-7.8px;top:686px;width:60px;text-align:center">-80</div>
<div class="t" style="left:47.4px;top:686px;width:60px;text-align:center">-60</div>
<div class="t" style="left:102.6px;top:686px;width:60px;text-align:center">-40</div>
<div class="t" style="left:157.8px;top:686px;width:60px;text-align:center">-20</div>
<div class="t" style="left:213.0px;top:686px;width:60px;text-align:center">0</div>
<div class="t" style="left:268.2px;top:686px;width:60px;text-align:center">20</div>
<div class="t" style="left:323.4px;top:686px;width:60px;text-align:center">40</div>
<div class="t" style="left:378.6px;top:686px;width:60px;text-align:center">60</div>
<div class="t" style="left:433.8px;top:686px;width:60px;text-align:center">80</div>
<div class="t" style="left:489.0px;top:686px;width:60px;text-align:center">100</div>
<div class="t" style="left:544.2px;top:686px;width:60px;text-align:center">120</div>
<div class="t" style="left:599.4px;top:686px;width:60px;text-align:center">140</div>
<div class="t" style="left:654.6px;top:686px;width:60px;text-align:center">160</div>
<div class="t" style="left:709.8px;top:686px;width:60px;text-align:center">180</div>
<div class="t" style="left:765.0px;top:686px;width:60px;text-align:center">200</div>
<div class="t" style="left:820.2px;top:686px;width:60px;text-align:center">220</div>
<div class="t" style="left:875.4px;top:686px;width:60px;text-align:center">240</div>
<div class="t" style="left:930.6px;top:686px;width:60px;text-align:center">260</div>
<div class="t" style="left:985.8px;top:686px;width:60px;text-align:center">280</div>
<div class="t" style="left:1041.0px;top:686px;width:60px;text-align:center">300</div>
<div class="a" style="left:0;top:698px;width:1112px;height:4px;background:linear-gradient(#7b7b7b,#6e6e6e)"></div>
<svg style="left:1098px;top:664px" width="14" height="12"><path d="M1 0L14 13M5 0L14 9M9 0L14 5" stroke="#ddd" stroke-width="1.2"/><path d="M2.5 0L14 11.5M6.5 0L14 7.5" stroke="#222" stroke-width=".8"/></svg>
<!-- timeline header -->
<div class="hdr" style="left:0;top:702px;width:1112px;height:26px;border-top:1px solid #858585"></div>
<svg style="left:0;top:715px" width="13" height="12"><path d="M0 1L11 12M0 5L7 12M0 9L3 12" stroke="#ddd" stroke-width="1.2"/><path d="M0 2.5L9.5 12M0 6.5L5.5 12" stroke="#222" stroke-width=".8"/></svg>
<div class="grp" style="left:9px;top:705px;width:30px;height:20px"></div>
<svg style="left:12px;top:707px" width="16" height="16" viewBox="0 0 16 16"><circle cx="8" cy="8" r="7" fill="#f2f2f2" stroke="#222" stroke-width=".8"/><path d="M8 2.5V4M8 12V13.5M2.5 8H4M12 8H13.5" stroke="#777" stroke-width=".8"/><path d="M8 8L5 5M8 8L6 11" stroke="#e02020" stroke-width="1.2"/></svg>
<div class="ud" style="left:29px;top:709px;color:#bbb"></div>
<div class="t" style="left:51px;top:710px">View</div>
<div class="t" style="left:96px;top:710px">Marker</div>
<div class="t" style="left:151px;top:710px">Frame</div>
<div class="t" style="left:203px;top:710px">Playback</div>
<div class="reg" style="left:261px;top:705px;width:40px;height:20px"><div class="sep" style="left:19px;top:0;height:18px;background:rgba(0,0,0,.3)"></div></div>
<svg style="left:263px;top:707px" width="16" height="16" viewBox="0 0 16 16"><circle cx="8" cy="8" r="7" fill="#f2f2f2" stroke="#222" stroke-width=".8"/><path d="M8 8V1.5A6.5 6.5 0 0 1 14.5 8Z" fill="#f5a020"/><path d="M8 8L5 11" stroke="#e02020" stroke-width="1.2"/></svg>
<svg style="left:284px;top:707px" width="14" height="16" viewBox="0 0 14 16"><path d="M3.5 7V5A3.5 3.5 0 0 1 10.5 5V7" stroke="#222" stroke-width="2.2" fill="none"/><path d="M3.5 7V5A3.5 3.5 0 0 1 10.5 5V7" stroke="#eee" stroke-width="1" fill="none"/><rect x="1.5" y="7" width="11" height="8" fill="#eee" stroke="#222" stroke-width=".8"/><rect x="6" y="10" width="2" height="3" fill="#666"/></svg>
<div class="num" style="left:306px;top:705px;width:228px;height:20px"><div class="sep" style="left:115px;top:0;height:18px;background:rgba(0,0,0,.55)"></div></div>
<div class="lt" style="left:313px;top:711px"></div><div class="rt" style="left:416px;top:711px"></div>
<div class="lt" style="left:429px;top:711px"></div><div class="rt" style="left:523px;top:711px"></div>
<div class="t" style="left:321px;top:710px">Start:</div><div class="t" style="left:399px;top:710px">1</div>
<div class="t" style="left:437px;top:710px">End:</div><div class="t" style="left:497px;top:710px">250</div>
<div class="num" style="left:539px;top:705px;width:90px;height:20px"></div>
<div class="lt" style="left:546px;top:711px"></div><div class="rt" style="left:618px;top:711px"></div>
<div class="t" style="left:604px;top:710px">1</div>
<div class="reg" style="left:645px;top:705px;width:120px;height:20px">
<div class="sep" style="left:19px;top:0;height:18px;background:rgba(0,0,0,.35)"></div><div class="sep" style="left:39px;top:0;height:18px;background:rgba(0,0,0,.35)"></div><div class="sep" style="left:58px;top:0;height:18px;background:rgba(0,0,0,.35)"></div><div class="sep" style="left:78px;top:0;height:18px;background:rgba(0,0,0,.35)"></div><div class="sep" style="left:98px;top:0;height:18px;background:rgba(0,0,0,.35)"></div>
</div>
<svg style="left:645px;top:705px" width="120" height="20"><g fill="#f2f2f2" stroke="#111" stroke-width=".9" stroke-linejoin="round">
<path d="M3.5 5.5V14.5M5 10L10 5.5V14.5ZM10 10L15 5.5V14.5Z"/>
<path d="M24 10L29 5.5V14.5ZM29 10L34 5.5V14.5Z"/>
<path d="M44 10L53 4.5V15.5Z"/>
<path d="M66 4.5L75 10L66 15.5Z"/>
<path d="M84 5.5L89 10L84 14.5ZM89 5.5L94 10L89 14.5Z"/>
<path d="M104 5.5L109 10L104 14.5ZM109 5.5L114 10L109 14.5ZM115.5 5.5V14.5"/>
</g></svg>
<div class="menu" style="left:770px;top:705px;width:115px;height:20px;padding-left:7px;line-height:21px">No Sync<div class="ud" style="left:101px;top:3px;color:#bbb"></div></div>
<div class="reg" style="left:901px;top:705px;width:20px;height:20px"></div>
<svg style="left:904px;top:708px" width="14" height="14"><circle cx="7" cy="7" r="5.2" fill="#e83818" stroke="#6a1000" stroke-width=".8"/></svg>
<div class="grp" style="left:926px;top:705px;width:35px;height:20px"></div>
<svg style="left:931px;top:709px" width="12" height="12"><path d="M6 1L11 6L6 11L1 6Z" fill="#ffb020" stroke="#111" stroke-width=".8"/></svg>
<div class="ud" style="left:950px;top:709px;color:#bbb"></div>
<div class="txt" style="left:966px;top:705px;width:131px;height:20px"></div>
<svg style="left:969px;top:707px" width="18" height="16" viewBox="0 0 18 16"><path d="M4 1V11" stroke="#222" stroke-width="2.4"/><path d="M4 1V11M4 2H6" stroke="#f0e8a0" stroke-width="1.2"/><circle cx="4" cy="12" r="2.6" fill="none" stroke="#222" stroke-width="2.2"/><circle cx="4" cy="12" r="2.6" fill="none" stroke="#f0e8a0" stroke-width="1"/><path d="M7 12L14 5" stroke="#222" stroke-width="2.4"/><path d="M7 12L14 5" stroke="#eee" stroke-width="1.2"/></svg>
<div class="reg" style="left:1096px;top:705px;width:20px;height:20px;border-radius:0"></div>
<svg style="left:1098px;top:707px" width="14" height="16" viewBox="0 0 14 16"><circle cx="4" cy="12" r="2.6" fill="none" stroke="#222" stroke-width="2.2"/><circle cx="4" cy="12" r="2.6" fill="none" stroke="#eee" stroke-width="1"/><path d="M6 10L13 3" stroke="#222" stroke-width="2.4"/><path d="M6 10L13 3" stroke="#eee" stroke-width="1.2"/></svg>
<svg style="left:1098px;top:714px" width="14" height="13"><path d="M1 0L14 13M5 0L14 9M9 0L14 5" stroke="#ddd" stroke-width="1.2"/><path d="M2.5 0L14 11.5M6.5 0L14 7.5" stroke="#222" stroke-width=".8"/></svg>
<!-- properties -->
<div class="a" style="left:1113px;top:50px;width:252px;height:586px;background:#727272"></div>
<div class="a" style="left:1112px;top:50px;width:1px;height:586px;background:#000"></div>
<div class="a" style="left:1113px;top:76px;width:252px;height:1px;background:#555"></div>
<div class="grp" style="left:1121px;top:54px;width:30px;height:20px"></div><svg style="left:1126px;top:57px" width="14" height="14" viewBox="0 0 14 14"><rect x=".8" y="1.2" width="12.4" height="4.6" rx="2.3" fill="#666" stroke="#111" stroke-width=".6"/><rect x="7" y="1.5" width="6" height="4" rx="2" fill="#eee"/><rect x=".8" y="8" width="12.4" height="4.6" rx="2.3" fill="#eee" stroke="#111" stroke-width=".6"/><path d="M3.5 9V11.6L2 10.3ZM10.5 9V11.6L12 10.3Z" fill="#111"/></svg><div class="ud" style="left:1142px;top:58px;color:#bbb"></div>
<div class="grp" style="left:1159px;top:55px;width:224px;height:19px;background:linear-gradient(#505050,#3c3c3c)">
<div class="sep" style="left:19px;top:0;height:17px;background:rgba(0,0,0,.6)"></div>
<div class="sep" style="left:39px;top:0;height:17px;background:rgba(0,0,0,.6)"></div>
<div class="sep" style="left:59px;top:0;height:17px;background:rgba(0,0,0,.6)"></div>
<div class="sep" style="left:79px;top:0;height:17px;background:rgba(0,0,0,.6)"></div>
<div class="sep" style="left:99px;top:0;height:17px;background:rgba(0,0,0,.6)"></div>
<div class="sep" style="left:119px;top:0;height:17px;background:rgba(0,0,0,.6)"></div>
<div class="sep" style="left:139px;top:0;height:17px;background:rgba(0,0,0,.6)"></div>
<div class="sep" style="left:159px;top:0;height:17px;background:rgba(0,0,0,.6)"></div>
<div class="sep" style="left:179px;top:0;height:17px;background:rgba(0,0,0,.6)"></div>
<div class="sep" style="left:199px;top:0;height:17px;background:rgba(0,0,0,.6)"></div>
<div class="a" style="left:120px;top:0;width:19px;height:17px;background:linear-gradient(#6b93d3,#4f79bb)"></div>
</div>
<svg style="left:1160px;top:55px" width="18" height="18" viewBox="0 0 18 18"><rect x="1.5" y="4.5" width="15" height="10" rx="1" fill="#d8d8d8" stroke="#111" stroke-width=".9"/><rect x="3" y="2.5" width="4" height="2" fill="#aaa" stroke="#111" stroke-width=".6"/><rect x="1.5" y="4.5" width="15" height="3" fill="#555" stroke="#111" stroke-width=".6"/><circle cx="10" cy="10" r="3.6" fill="#333" stroke="#111" stroke-width=".8"/><circle cx="10" cy="10" r="2" fill="#7a2020"/><circle cx="3.5" cy="6" r=".8" fill="#e02020"/></svg>
<svg style="left:1180px;top:55px" width="18" height="18" viewBox="0 0 18 18"><rect x="4" y="5" width="11" height="11" fill="#c8b890" stroke="#222" stroke-width=".7" transform="rotate(10 9 10)"/><rect x="2" y="2" width="11" height="11" fill="#dde" stroke="#222" stroke-width=".8"/><rect x="3.5" y="3.5" width="8" height="8" fill="#5a7aa8"/><circle cx="7" cy="9" r="2" fill="#ccc"/><path d="M7 3.5V8" stroke="#ddd" stroke-width="1.2"/></svg>
<svg style="left:1200px;top:55px" width="18" height="18" viewBox="0 0 18 18"><circle cx="4" cy="3.5" r="2.6" fill="#e8e070" opacity=".7"/><circle cx="4" cy="3.5" r="1.4" fill="#ffffa0"/><rect x="9" y="4" width="5.5" height="10" rx="2.5" fill="#6b93d6" stroke="#123" stroke-width=".6"/><circle cx="7" cy="12.5" r="3.6" fill="#ccc" stroke="#222" stroke-width=".6"/></svg>
<svg style="left:1220px;top:55px" width="18" height="18" viewBox="0 0 18 18"><circle cx="8.5" cy="9" r="7" fill="#5a7aa8" stroke="#222" stroke-width=".8"/><path d="M4 5C6 6 7 8 5.5 10C4.5 12 6 14 7 15M9 3C11 4 13 5 12 8C11.5 10 13 11 15 10" stroke="#6a8a5a" stroke-width="2" fill="none"/><circle cx="6.5" cy="6.5" r="2.5" fill="#fff" opacity=".25"/></svg>
<svg style="left:1240px;top:55px" width="18" height="18" viewBox="0 0 18 18"><path d="M9 1.5L15.5 4.5V12.5L9 16L2.5 12.5V4.5Z" fill="#b88a58" stroke="#3a1e05" stroke-width=".9"/><path d="M2.5 4.5L9 7.5L15.5 4.5L9 1.5Z" fill="#d8b080"/><path d="M9 7.5V16L15.5 12.5V4.5Z" fill="#9a6c3c"/></svg>
<svg style="left:1260px;top:55px" width="18" height="18" viewBox="0 0 18 18"><g fill="none" stroke="#222" stroke-width="2.6"><rect x="1.5" y="7" width="9" height="5" rx="2.5" transform="rotate(-35 6 9.5)"/><rect x="7.5" y="5" width="9" height="5" rx="2.5" transform="rotate(-35 12 7.5)"/></g><g fill="none" stroke="#ddd" stroke-width="1.2"><rect x="1.5" y="7" width="9" height="5" rx="2.5" transform="rotate(-35 6 9.5)"/><rect x="7.5" y="5" width="9" height="5" rx="2.5" transform="rotate(-35 12 7.5)"/></g></svg>
<svg style="left:1280px;top:55px" width="18" height="18" viewBox="0 0 18 18"><path d="M2.5 15.5L9.5 8.5M11.5 2.5C9.5 3.5 9 6 10 8C12 9 14.5 8.5 15.5 6.5L13.5 6.5L12 5L12 3Z" stroke="#111" stroke-width="3" fill="none" stroke-linejoin="round"/><path d="M2.5 15.5L9.5 8.5M11.5 2.5C9.5 3.5 9 6 10 8C12 9 14.5 8.5 15.5 6.5L13.5 6.5L12 5L12 3Z" stroke="#fff" stroke-width="1.5" fill="none" stroke-linejoin="round"/></svg>
<svg style="left:1300px;top:55px" width="18" height="18" viewBox="0 0 18 18"><path d="M2.5 3.5H15.5L9 15Z" fill="none" stroke="#111" stroke-width="2.2"/><path d="M2.5 3.5H15.5L9 15Z" fill="none" stroke="#ccc" stroke-width=".9"/><circle cx="2.5" cy="3.5" r="1.6" fill="#fff" stroke="#111" stroke-width=".7"/><circle cx="15.5" cy="3.5" r="1.6" fill="#fff" stroke="#111" stroke-width=".7"/><circle cx="9" cy="15" r="1.6" fill="#fff" stroke="#111" stroke-width=".7"/></svg>
<svg style="left:1320px;top:55px" width="18" height="18" viewBox="0 0 18 18"><defs><radialGradient id="mg" cx=".35" cy=".3" r=".75"><stop offset="0" stop-color="#eee"/><stop offset=".5" stop-color="#999"/><stop offset="1" stop-color="#444"/></radialGradient></defs><circle cx="9" cy="9" r="7" fill="url(#mg)" stroke="#222" stroke-width=".7"/><path d="M9 9V16A7 7 0 0 0 16 9Z" fill="#a06060" opacity=".55"/></svg>
<svg style="left:1340px;top:55px" width="18" height="18" viewBox="0 0 18 18"><rect x="2" y="2" width="14" height="14" fill="#ddd" stroke="#222" stroke-width=".7"/><rect x="2.0" y="2.0" width="2.8" height="2.8" fill="#8a2a2a" opacity=".85"/><rect x="2.0" y="7.6" width="2.8" height="2.8" fill="#8a2a2a" opacity=".85"/><rect x="2.0" y="13.2" width="2.8" height="2.8" fill="#8a2a2a" opacity=".85"/><rect x="4.8" y="4.8" width="2.8" height="2.8" fill="#8a2a2a" opacity=".85"/><rect x="4.8" y="10.4" width="2.8" height="2.8" fill="#8a2a2a" opacity=".85"/><rect x="7.6" y="2.0" width="2.8" height="2.8" fill="#8a2a2a" opacity=".85"/><rect x="7.6" y="7.6" width="2.8" height="2.8" fill="#8a2a2a" opacity=".85"/><rect x="7.6" y="13.2" width="2.8" height="2.8" fill="#8a2a2a" opacity=".85"/><rect x="10.4" y="4.8" width="2.8" height="2.8" fill="#8a2a2a" opacity=".85"/><rect x="10.4" y="10.4" width="2.8" height="2.8" fill="#8a2a2a" opacity=".85"/><rect x="13.2" y="2.0" width="2.8" height="2.8" fill="#8a2a2a" opacity=".85"/><rect x="13.2" y="7.6" width="2.8" height="2.8" fill="#8a2a2a" opacity=".85"/><rect x="13.2" y="13.2" width="2.8" height="2.8" fill="#8a2a2a" opacity=".85"/></svg>
<svg style="left:1360px;top:55px" width="18" height="18" viewBox="0 0 18 18"><circle cx="8" cy="9" r="2" fill="#e0c040"/><path d="M8 9L1 5M8 9L1 13" stroke="#e0c040" stroke-width="1.2"/></svg>
<svg style="left:1352px;top:50px" width="13" height="13"><path d="M0 0L13 13M4 0L13 9M8 0L13 5" stroke="#ddd" stroke-width="1.2"/><path d="M1.5 0L13 11.5M5.5 0L13 7.5" stroke="#222" stroke-width=".8"/></svg>
<div class="menu" style="left:1122px;top:88px;width:219px;height:20px;padding-left:6px;line-height:21px">Add Modifier<div class="ud" style="left:205px;top:3px;color:#bbb"></div></div>
<div class="a" style="left:1349px;top:81px;width:13px;height:550px;border-radius:6px;background:#626262;border:1px solid #4a4a4a"></div>
<div class="a" style="left:1349px;top:111px;width:13px;height:520px;border-radius:6px;background:linear-gradient(90deg,#9a9a9a,#8a8a8a);border:1px solid #4a4a4a"></div>
<div class="box" style="left:1122px;top:113px;width:219px;height:190px"></div>
<div class="a" style="left:1123px;top:145px;width:217px;height:1px;background:#3a3a3a"></div>
<svg style="left:1128px;top:128px" width="12" height="8"><path d="M1 1H11L6 7Z" fill="#fff" stroke="#222" stroke-width=".9" stroke-linejoin="round"/></svg>
<svg style="left:1150px;top:122px" width="16" height="17" viewBox="0 0 16 17"><path d="M8 1L14.5 4.7V12.3L8 16L1.5 12.3V4.7Z" fill="#8c8c8c" stroke="#444" stroke-width=".8"/><circle cx="8" cy="8.5" r="4.6" fill="#3d74d8" stroke="#0d2a66" stroke-width=".7"/><circle cx="6.8" cy="7.2" r="1.6" fill="#a8c8ff"/></svg>
<div class="reg" style="left:1167px;top:121px;width:25px;height:20px;text-align:left;padding-left:7px;background:linear-gradient(#b4b4b4,#a0a0a0)">Su</div>
<div class="grp" style="left:1199px;top:121px;width:72px;height:20px"><div class="a" style="left:18px;top:0;width:18px;height:18px;background:linear-gradient(#6a6a6a,#5c5c5c)"></div><div class="a" style="left:36px;top:0;width:17px;height:18px;background:linear-gradient(#6a6a6a,#5c5c5c)"></div><div class="sep" style="left:17px;top:0;height:18px;background:#333"></div><div class="sep" style="left:35px;top:0;height:18px;background:#333"></div><div class="sep" style="left:52px;top:0;height:18px;background:#333"></div></div>
<svg style="left:1200px;top:123px" width="16" height="16" viewBox="0 0 18 18"><rect x="1.5" y="4.5" width="15" height="10" rx="1" fill="#d8d8d8" stroke="#111" stroke-width=".9"/><rect x="3" y="2.5" width="4" height="2" fill="#aaa" stroke="#111" stroke-width=".6"/><rect x="1.5" y="4.5" width="15" height="3" fill="#555" stroke="#111" stroke-width=".6"/><circle cx="10" cy="10" r="3.6" fill="#333" stroke="#111" stroke-width=".8"/><circle cx="10" cy="10" r="2" fill="#7a2020"/><circle cx="3.5" cy="6" r=".8" fill="#e02020"/></svg>
<svg style="left:1218px;top:123px" width="16" height="16" viewBox="0 0 16 16"><path d="M1 8.5C4 4 12 4 15 8.5C12 12 4 12 1 8.5Z" fill="#f4f4f4" stroke="#111" stroke-width="1"/><circle cx="8" cy="8" r="2.6" fill="#222"/><circle cx="7.2" cy="7.2" r=".8" fill="#fff"/></svg>
<svg style="left:1236px;top:123px" width="16" height="16" viewBox="0 0 16 16"><path d="M5 2L13 3.5V12L10 14.5L3 13V4Z" fill="#aaa" stroke="#444" stroke-width=".6"/><g fill="#f0a040" stroke="#111" stroke-width=".8"><rect x="2" y="2" width="3" height="3"/><rect x="9" y="2.5" width="3" height="3"/><rect x="2" y="11" width="3" height="3"/><rect x="9" y="11.5" width="3" height="3"/><rect x="6" y="6.5" width="3" height="3"/></g></svg>
<svg style="left:1254px;top:123px" width="16" height="16" viewBox="0 0 18 18"><path d="M2.5 3.5H15.5L9 15Z" fill="none" stroke="#111" stroke-width="2.2"/><path d="M2.5 3.5H15.5L9 15Z" fill="none" stroke="#ccc" stroke-width=".9"/><circle cx="2.5" cy="3.5" r="1.6" fill="#fff" stroke="#111" stroke-width=".7"/><circle cx="15.5" cy="3.5" r="1.6" fill="#fff" stroke="#111" stroke-width=".7"/><circle cx="9" cy="15" r="1.6" fill="#fff" stroke="#111" stroke-width=".7"/></svg>
<div class="reg" style="left:1279px;top:121px;width:33px;height:20px"><div class="sep" style="left:15px;top:0;height:18px;background:rgba(0,0,0,.4)"></div></div><svg style="left:1282px;top:127px" width="12" height="8"><path d="M1 7H11L6 1Z" fill="#fff" stroke="#222" stroke-width=".9" stroke-linejoin="round"/></svg><svg style="left:1298px;top:127px" width="12" height="8"><path d="M1 1H11L6 7Z" fill="#fff" stroke="#222" stroke-width=".9" stroke-linejoin="round"/></svg>
<svg style="left:1320px;top:124px" width="14" height="14" viewBox="0 0 14 14"><path d="M2 2L12 12M12 2L2 12" stroke="#111" stroke-width="3.4"/><path d="M2.5 2.5L11.5 11.5M11.5 2.5L2.5 11.5" stroke="#fff" stroke-width="1.7"/></svg>
<div class="reg" style="left:1126px;top:154px;width:101px;height:20px">Apply</div><div class="reg" style="left:1235px;top:154px;width:101px;height:20px">Copy</div>
<div class="a" style="left:1126px;top:182px;width:210px;height:20px;border:1px solid rgba(0,0,0,.7);border-radius:4px;overflow:hidden;background:linear-gradient(#4b4b4b,#3d3d3d)"><div class="a" style="left:0;top:0;width:103px;height:18px;background:linear-gradient(#4a74b6,#5c86c8)"></div></div>
<div class="t" style="left:1126px;top:187px;width:104px;text-align:center">Catmull-Clark</div>
<div class="t w" style="left:1230px;top:187px;width:105px;text-align:center">Simple</div>
<div class="t" style="left:1134px;top:209px">Subdivisions:</div>
<div class="t" style="left:1243px;top:209px">Options:</div>
<div class="num" style="left:1126px;top:226px;width:101px;height:20px"><span class="a" style="left:15px;top:0;line-height:21px">View:</span><span class="a" style="left:77px;top:0;line-height:21px">2</span></div>
<div class="lt" style="left:1133px;top:233px"></div><div class="rt" style="left:1217px;top:233px"></div>
<div class="num" style="left:1126px;top:248px;width:101px;height:20px"><span class="a" style="left:15px;top:0;line-height:21px">Render:</span><span class="a" style="left:77px;top:0;line-height:21px">2</span></div>
<div class="lt" style="left:1133px;top:255px"></div><div class="rt" style="left:1217px;top:255px"></div>
<div class="cb" style="left:1238px;top:229px"></div>
<svg style="left:1239px;top:227px" width="14" height="15"><path d="M2.5 8L6 11.5L12 2.5" stroke="#222" stroke-width="3" fill="none"/><path d="M2.5 8L6 11.5L12 2.5" stroke="#fff" stroke-width="1.6" fill="none"/></svg>
<div class="t" style="left:1260px;top:230px;color:#fff">Subdivide UVs</div>
<div class="cb" style="left:1238px;top:251px"></div>
<div class="t" style="left:1260px;top:252px;color:#000">Optimal Dis...</div>
<div class="cb" style="left:1238px;top:273px"></div>
<div class="t" style="left:1260px;top:274px;color:#000">Use OpenSu...</div>
<div class="box" style="left:1122px;top:308px;width:219px;height:145px"></div>
<div class="a" style="left:1123px;top:339px;width:217px;height:1px;background:#3a3a3a"></div>
<svg style="left:1128px;top:323px" width="12" height="8"><path d="M1 1H11L6 7Z" fill="#fff" stroke="#222" stroke-width=".9" stroke-linejoin="round"/></svg>
<svg style="left:1155px;top:318px" width="15" height="15" viewBox="0 0 15 15"><rect x="1.5" y="1.5" width="7" height="7" fill="none" stroke="#1e3c78" stroke-width="1.6"/><rect x="1.5" y="1.5" width="7" height="7" fill="none" stroke="#7aa6e8" stroke-width=".7"/><rect x="6" y="6" width="7.5" height="7.5" fill="#6e9ee6" stroke="#1e3c78" stroke-width="1"/></svg>
<div class="reg" style="left:1176px;top:316px;width:34px;height:20px;text-align:left;padding-left:7px;background:linear-gradient(#b4b4b4,#a0a0a0)">Bool</div>
<div class="grp" style="left:1218px;top:316px;width:42px;height:20px"><div class="a" style="left:20px;top:0;width:21px;height:18px;background:linear-gradient(#6a6a6a,#5c5c5c)"></div><div class="sep" style="left:19px;top:0;height:18px;background:#333"></div></div>
<svg style="left:1220px;top:318px" width="16" height="16" viewBox="0 0 18 18"><rect x="1.5" y="4.5" width="15" height="10" rx="1" fill="#d8d8d8" stroke="#111" stroke-width=".9"/><rect x="3" y="2.5" width="4" height="2" fill="#aaa" stroke="#111" stroke-width=".6"/><rect x="1.5" y="4.5" width="15" height="3" fill="#555" stroke="#111" stroke-width=".6"/><circle cx="10" cy="10" r="3.6" fill="#333" stroke="#111" stroke-width=".8"/><circle cx="10" cy="10" r="2" fill="#7a2020"/><circle cx="3.5" cy="6" r=".8" fill="#e02020"/></svg>
<svg style="left:1240px;top:318px" width="16" height="16" viewBox="0 0 16 16"><path d="M1 8.5C4 4 12 4 15 8.5C12 12 4 12 1 8.5Z" fill="#f4f4f4" stroke="#111" stroke-width="1"/><circle cx="8" cy="8" r="2.6" fill="#222"/><circle cx="7.2" cy="7.2" r=".8" fill="#fff"/></svg>
<div class="reg" style="left:1268px;top:316px;width:42px;height:20px"><div class="sep" style="left:19px;top:0;height:18px;background:rgba(0,0,0,.4)"></div></div><svg style="left:1273px;top:322px" width="12" height="8"><path d="M1 7H11L6 1Z" fill="#fff" stroke="#222" stroke-width=".9" stroke-linejoin="round"/></svg><svg style="left:1293px;top:322px" width="12" height="8"><path d="M1 1H11L6 7Z" fill="#fff" stroke="#222" stroke-width=".9" stroke-linejoin="round"/></svg>
<svg style="left:1320px;top:319px" width="14" height="14" viewBox="0 0 14 14"><path d="M2 2L12 12M12 2L2 12" stroke="#111" stroke-width="3.4"/><path d="M2.5 2.5L11.5 11.5M11.5 2.5L2.5 11.5" stroke="#fff" stroke-width="1.7"/></svg>
<div class="reg" style="left:1126px;top:349px;width:101px;height:20px">Apply</div><div class="reg" style="left:1235px;top:349px;width:101px;height:20px">Copy</div>
<div class="t" style="left:1134px;top:382px">Operation:</div>
<div class="t" style="left:1243px;top:382px">Object:</div>
<div class="menu" style="left:1126px;top:399px;width:101px;height:20px;padding-left:7px;line-height:21px">Intersect<div class="ud" style="left:88px;top:3px;color:#bbb"></div></div>
<div class="txt" style="left:1235px;top:399px;width:101px;height:20px;padding-left:23px;line-height:21px;background:linear-gradient(#a3a3a3,#b3b3b3)">Cylinder</div>
<svg style="left:1240px;top:402px" width="14" height="14" viewBox="0 0 18 18"><path d="M9 1.5L15.5 4.5V12.5L9 16L2.5 12.5V4.5Z" fill="#e8902c" stroke="#3a1e05" stroke-width=".9"/><path d="M2.5 4.5L9 7.5L15.5 4.5L9 1.5Z" fill="#ffc77a"/><path d="M9 7.5V16L15.5 12.5V4.5Z" fill="#c06a1a"/></svg>
<svg style="left:1320px;top:403px" width="13" height="13" viewBox="0 0 14 14"><path d="M2 2L12 12M12 2L2 12" stroke="#111" stroke-width="3.4"/><path d="M2.5 2.5L11.5 11.5M11.5 2.5L2.5 11.5" stroke="#fff" stroke-width="1.7"/></svg>
<div class="t" style="left:1134px;top:426px">Solver:</div>
<div class="menu" style="left:1235px;top:421px;width:101px;height:20px;padding-left:7px;line-height:21px">Carve<div class="ud" style="left:88px;top:3px;color:#bbb"></div></div>
<div class="box" style="left:1122px;top:459px;width:219px;height:167px"></div>
<div class="a" style="left:1123px;top:490px;width:217px;height:1px;background:#3a3a3a"></div>
<svg style="left:1128px;top:474px" width="12" height="8"><path d="M1 1H11L6 7Z" fill="#fff" stroke="#222" stroke-width=".9" stroke-linejoin="round"/></svg>
<svg style="left:1155px;top:469px" width="15" height="15" viewBox="0 0 15 15"><rect x="1.5" y="1.5" width="7" height="7" fill="none" stroke="#1e3c78" stroke-width="1.6"/><rect x="1.5" y="1.5" width="7" height="7" fill="none" stroke="#7aa6e8" stroke-width=".7"/><rect x="6" y="6" width="7.5" height="7.5" fill="#6e9ee6" stroke="#1e3c78" stroke-width="1"/></svg>
<div class="reg" style="left:1176px;top:467px;width:34px;height:20px;text-align:left;padding-left:7px;background:linear-gradient(#b4b4b4,#a0a0a0)">Bool</div>
<div class="grp" style="left:1218px;top:467px;width:42px;height:20px"><div class="a" style="left:20px;top:0;width:21px;height:18px;background:linear-gradient(#6a6a6a,#5c5c5c)"></div><div class="sep" style="left:19px;top:0;height:18px;background:#333"></div></div>
<svg style="left:1220px;top:469px" width="16" height="16" viewBox="0 0 18 18"><rect x="1.5" y="4.5" width="15" height="10" rx="1" fill="#d8d8d8" stroke="#111" stroke-width=".9"/><rect x="3" y="2.5" width="4" height="2" fill="#aaa" stroke="#111" stroke-width=".6"/><rect x="1.5" y="4.5" width="15" height="3" fill="#555" stroke="#111" stroke-width=".6"/><circle cx="10" cy="10" r="3.6" fill="#333" stroke="#111" stroke-width=".8"/><circle cx="10" cy="10" r="2" fill="#7a2020"/><circle cx="3.5" cy="6" r=".8" fill="#e02020"/></svg>
<svg style="left:1240px;top:469px" width="16" height="16" viewBox="0 0 16 16"><path d="M1 8.5C4 4 12 4 15 8.5C12 12 4 12 1 8.5Z" fill="#f4f4f4" stroke="#111" stroke-width="1"/><circle cx="8" cy="8" r="2.6" fill="#222"/><circle cx="7.2" cy="7.2" r=".8" fill="#fff"/></svg>
<div class="reg" style="left:1268px;top:467px;width:42px;height:20px"><div class="sep" style="left:19px;top:0;height:18px;background:rgba(0,0,0,.4)"></div></div><svg style="left:1273px;top:473px" width="12" height="8"><path d="M1 7H11L6 1Z" fill="#fff" stroke="#222" stroke-width=".9" stroke-linejoin="round"/></svg><svg style="left:1293px;top:473px" width="12" height="8"><path d="M1 1H11L6 7Z" fill="#fff" stroke="#222" stroke-width=".9" stroke-linejoin="round"/></svg>
<svg style="left:1320px;top:470px" width="14" height="14" viewBox="0 0 14 14"><path d="M2 2L12 12M12 2L2 12" stroke="#111" stroke-width="3.4"/><path d="M2.5 2.5L11.5 11.5M11.5 2.5L2.5 11.5" stroke="#fff" stroke-width="1.7"/></svg>
<div class="reg" style="left:1126px;top:500px;width:101px;height:20px">Apply</div><div class="reg" style="left:1235px;top:500px;width:101px;height:20px">Copy</div>
<div class="t" style="left:1134px;top:533px">Operation:</div>
<div class="t" style="left:1243px;top:533px">Object:</div>
<div class="menu" style="left:1126px;top:550px;width:101px;height:20px;padding-left:7px;line-height:21px">Difference<div class="ud" style="left:88px;top:3px;color:#bbb"></div></div>
<div class="txt" style="left:1235px;top:550px;width:101px;height:20px;padding-left:23px;line-height:21px;background:linear-gradient(#a3a3a3,#b3b3b3)">Cube.002</div>
<svg style="left:1240px;top:553px" width="14" height="14" viewBox="0 0 18 18"><path d="M9 1.5L15.5 4.5V12.5L9 16L2.5 12.5V4.5Z" fill="#e8902c" stroke="#3a1e05" stroke-width=".9"/><path d="M2.5 4.5L9 7.5L15.5 4.5L9 1.5Z" fill="#ffc77a"/><path d="M9 7.5V16L15.5 12.5V4.5Z" fill="#c06a1a"/></svg>
<svg style="left:1320px;top:554px" width="13" height="13" viewBox="0 0 14 14"><path d="M2 2L12 12M12 2L2 12" stroke="#111" stroke-width="3.4"/><path d="M2.5 2.5L11.5 11.5M11.5 2.5L2.5 11.5" stroke="#fff" stroke-width="1.7"/></svg>
<div class="t" style="left:1134px;top:577px">Solver:</div>
<div class="menu" style="left:1235px;top:572px;width:101px;height:20px;padding-left:7px;line-height:21px">BMesh<div class="ud" style="left:88px;top:3px;color:#bbb"></div></div>
<div class="num" style="left:1126px;top:594px;width:210px;height:19px;line-height:17px"><span class="a" style="left:15px;top:0">Overlap Threshold:</span><span class="a" style="right:16px;top:0">0m</span></div>
<div class="lt" style="left:1133px;top:600px"></div><div class="rt" style="left:1326px;top:600px"></div>
<svg style="left:1113px;top:623px" width="13" height="13"><path d="M0 0L13 13M0 4L9 13M0 8L5 13" stroke="#ddd" stroke-width="1.2"/><path d="M0 1.5L11.5 13M0 5.5L7.5 13" stroke="#222" stroke-width=".8"/></svg>
<div class="a" style="left:1112px;top:635px;width:253px;height:2px;background:#000"></div>
<div class="a" style="left:1113px;top:637px;width:252px;height:91px;background:#727272"></div>
<div class="a" style="left:1112px;top:637px;width:1px;height:91px;background:#000"></div>
<div class="menu" style="left:1121px;top:650px;width:106px;height:24px;padding-left:8px;line-height:28px">Textured<div class="ud" style="left:95px;top:11px;color:#bbb"></div></div>
<div class="a" style="left:1235px;top:650px;width:106px;height:24px;border-radius:4px;background:#fff;border:1px solid #333"></div>
<div class="a" style="left:1113px;top:637px;width:252px;height:24px;background:#727272;border-bottom:1px solid #5a5a5a"></div>
<div class="grp" style="left:1122px;top:639px;width:30px;height:20px"></div><svg style="left:1127px;top:642px" width="14" height="14" viewBox="0 0 14 14"><rect x=".8" y="1.2" width="12.4" height="4.6" rx="2.3" fill="#666" stroke="#111" stroke-width=".6"/><rect x="7" y="1.5" width="6" height="4" rx="2" fill="#eee"/><rect x=".8" y="8" width="12.4" height="4.6" rx="2.3" fill="#eee" stroke="#111" stroke-width=".6"/><path d="M3.5 9V11.6L2 10.3ZM10.5 9V11.6L12 10.3Z" fill="#111"/></svg><div class="ud" style="left:1143px;top:643px;color:#bbb"></div>
<div class="grp" style="left:1160px;top:640px;width:224px;height:19px;background:linear-gradient(#505050,#3c3c3c)">
<div class="sep" style="left:19px;top:0;height:17px;background:rgba(0,0,0,.6)"></div>
<div class="sep" style="left:39px;top:0;height:17px;background:rgba(0,0,0,.6)"></div>
<div class="sep" style="left:59px;top:0;height:17px;background:rgba(0,0,0,.6)"></div>
<div class="sep" style="left:79px;top:0;height:17px;background:rgba(0,0,0,.6)"></div>
<div class="sep" style="left:99px;top:0;height:17px;background:rgba(0,0,0,.6)"></div>
<div class="sep" style="left:119px;top:0;height:17px;background:rgba(0,0,0,.6)"></div>
<div class="sep" style="left:139px;top:0;height:17px;background:rgba(0,0,0,.6)"></div>
<div class="sep" style="left:159px;top:0;height:17px;background:rgba(0,0,0,.6)"></div>
<div class="sep" style="left:179px;top:0;height:17px;background:rgba(0,0,0,.6)"></div>
<div class="sep" style="left:199px;top:0;height:17px;background:rgba(0,0,0,.6)"></div>
<div class="a" style="left:80px;top:0;width:19px;height:17px;background:linear-gradient(#6b93d3,#4f79bb)"></div>
</div>
<svg style="left:1161px;top:640px" width="18" height="18" viewBox="0 0 18 18"><rect x="1.5" y="4.5" width="15" height="10" rx="1" fill="#d8d8d8" stroke="#111" stroke-width=".9"/><rect x="3" y="2.5" width="4" height="2" fill="#aaa" stroke="#111" stroke-width=".6"/><rect x="1.5" y="4.5" width="15" height="3" fill="#555" stroke="#111" stroke-width=".6"/><circle cx="10" cy="10" r="3.6" fill="#333" stroke="#111" stroke-width=".8"/><circle cx="10" cy="10" r="2" fill="#7a2020"/><circle cx="3.5" cy="6" r=".8" fill="#e02020"/></svg>
<svg style="left:1181px;top:640px" width="18" height="18" viewBox="0 0 18 18"><rect x="4" y="5" width="11" height="11" fill="#c8b890" stroke="#222" stroke-width=".7" transform="rotate(10 9 10)"/><rect x="2" y="2" width="11" height="11" fill="#dde" stroke="#222" stroke-width=".8"/><rect x="3.5" y="3.5" width="8" height="8" fill="#5a7aa8"/><circle cx="7" cy="9" r="2" fill="#ccc"/><path d="M7 3.5V8" stroke="#ddd" stroke-width="1.2"/></svg>
<svg style="left:1201px;top:640px" width="18" height="18" viewBox="0 0 18 18"><circle cx="4" cy="3.5" r="2.6" fill="#e8e070" opacity=".7"/><circle cx="4" cy="3.5" r="1.4" fill="#ffffa0"/><rect x="9" y="4" width="5.5" height="10" rx="2.5" fill="#6b93d6" stroke="#123" stroke-width=".6"/><circle cx="7" cy="12.5" r="3.6" fill="#ccc" stroke="#222" stroke-width=".6"/></svg>
<svg style="left:1221px;top:640px" width="18" height="18" viewBox="0 0 18 18"><circle cx="8.5" cy="9" r="7" fill="#5a7aa8" stroke="#222" stroke-width=".8"/><path d="M4 5C6 6 7 8 5.5 10C4.5 12 6 14 7 15M9 3C11 4 13 5 12 8C11.5 10 13 11 15 10" stroke="#6a8a5a" stroke-width="2" fill="none"/><circle cx="6.5" cy="6.5" r="2.5" fill="#fff" opacity=".25"/></svg>
<svg style="left:1241px;top:640px" width="18" height="18" viewBox="0 0 18 18"><path d="M9 1.5L15.5 4.5V12.5L9 16L2.5 12.5V4.5Z" fill="#e8902c" stroke="#3a1e05" stroke-width=".9"/><path d="M2.5 4.5L9 7.5L15.5 4.5L9 1.5Z" fill="#ffc77a"/><path d="M9 7.5V16L15.5 12.5V4.5Z" fill="#c06a1a"/></svg>
<svg style="left:1261px;top:640px" width="18" height="18" viewBox="0 0 18 18"><g fill="none" stroke="#222" stroke-width="2.6"><rect x="1.5" y="7" width="9" height="5" rx="2.5" transform="rotate(-35 6 9.5)"/><rect x="7.5" y="5" width="9" height="5" rx="2.5" transform="rotate(-35 12 7.5)"/></g><g fill="none" stroke="#ddd" stroke-width="1.2"><rect x="1.5" y="7" width="9" height="5" rx="2.5" transform="rotate(-35 6 9.5)"/><rect x="7.5" y="5" width="9" height="5" rx="2.5" transform="rotate(-35 12 7.5)"/></g></svg>
<svg style="left:1281px;top:640px" width="18" height="18" viewBox="0 0 18 18"><path d="M2.5 15.5L9.5 8.5M11.5 2.5C9.5 3.5 9 6 10 8C12 9 14.5 8.5 15.5 6.5L13.5 6.5L12 5L12 3Z" stroke="#111" stroke-width="3" fill="none" stroke-linejoin="round"/><path d="M2.5 15.5L9.5 8.5M11.5 2.5C9.5 3.5 9 6 10 8C12 9 14.5 8.5 15.5 6.5L13.5 6.5L12 5L12 3Z" stroke="#6a92d0" stroke-width="1.5" fill="none" stroke-linejoin="round"/></svg>
<svg style="left:1301px;top:640px" width="18" height="18" viewBox="0 0 18 18"><path d="M2.5 3.5H15.5L9 15Z" fill="none" stroke="#111" stroke-width="2.2"/><path d="M2.5 3.5H15.5L9 15Z" fill="none" stroke="#ccc" stroke-width=".9"/><circle cx="2.5" cy="3.5" r="1.6" fill="#fff" stroke="#111" stroke-width=".7"/><circle cx="15.5" cy="3.5" r="1.6" fill="#fff" stroke="#111" stroke-width=".7"/><circle cx="9" cy="15" r="1.6" fill="#fff" stroke="#111" stroke-width=".7"/></svg>
<svg style="left:1321px;top:640px" width="18" height="18" viewBox="0 0 18 18"><defs><radialGradient id="mg" cx=".35" cy=".3" r=".75"><stop offset="0" stop-color="#eee"/><stop offset=".5" stop-color="#999"/><stop offset="1" stop-color="#444"/></radialGradient></defs><circle cx="9" cy="9" r="7" fill="url(#mg)" stroke="#222" stroke-width=".7"/><path d="M9 9V16A7 7 0 0 0 16 9Z" fill="#a06060" opacity=".55"/></svg>
<svg style="left:1341px;top:640px" width="18" height="18" viewBox="0 0 18 18"><rect x="2" y="2" width="14" height="14" fill="#ddd" stroke="#222" stroke-width=".7"/><rect x="2.0" y="2.0" width="2.8" height="2.8" fill="#8a2a2a" opacity=".85"/><rect x="2.0" y="7.6" width="2.8" height="2.8" fill="#8a2a2a" opacity=".85"/><rect x="2.0" y="13.2" width="2.8" height="2.8" fill="#8a2a2a" opacity=".85"/><rect x="4.8" y="4.8" width="2.8" height="2.8" fill="#8a2a2a" opacity=".85"/><rect x="4.8" y="10.4" width="2.8" height="2.8" fill="#8a2a2a" opacity=".85"/><rect x="7.6" y="2.0" width="2.8" height="2.8" fill="#8a2a2a" opacity=".85"/><rect x="7.6" y="7.6" width="2.8" height="2.8" fill="#8a2a2a" opacity=".85"/><rect x="7.6" y="13.2" width="2.8" height="2.8" fill="#8a2a2a" opacity=".85"/><rect x="10.4" y="4.8" width="2.8" height="2.8" fill="#8a2a2a" opacity=".85"/><rect x="10.4" y="10.4" width="2.8" height="2.8" fill="#8a2a2a" opacity=".85"/><rect x="13.2" y="2.0" width="2.8" height="2.8" fill="#8a2a2a" opacity=".85"/><rect x="13.2" y="7.6" width="2.8" height="2.8" fill="#8a2a2a" opacity=".85"/><rect x="13.2" y="13.2" width="2.8" height="2.8" fill="#8a2a2a" opacity=".85"/></svg>
<svg style="left:1361px;top:640px" width="18" height="18" viewBox="0 0 18 18"><circle cx="8" cy="9" r="2" fill="#e0c040"/><path d="M8 9L1 5M8 9L1 13" stroke="#e0c040" stroke-width="1.2"/></svg>
<svg style="left:1352px;top:637px" width="13" height="13"><path d="M0 0L13 13M4 0L13 9M8 0L13 5" stroke="#ddd" stroke-width="1.2"/><path d="M1.5 0L13 11.5M5.5 0L13 7.5" stroke="#222" stroke-width=".8"/></svg>
<div class="a" style="left:1118px;top:682px;width:226px;height:1px;background:#4e4e4e"></div>
<div class="a" style="left:1118px;top:706px;width:226px;height:1px;background:#4e4e4e"></div>
<svg style="left:1126px;top:690px" width="10" height="10"><path d="M1 1V9L9 5Z" fill="#222"/></svg>
<div class="t" style="left:1138px;top:688px;font-size:12.4px">Duplication</div>
<svg style="left:1328px;top:691px" width="11" height="8"><g fill="#c8c8c8"><rect x="0.0" y="0" width="1.2" height="1.2"/><rect x="0.0" y="3" width="1.2" height="1.2"/><rect x="0.0" y="6" width="1.2" height="1.2"/><rect x="2.5" y="0" width="1.2" height="1.2"/><rect x="2.5" y="3" width="1.2" height="1.2"/><rect x="2.5" y="6" width="1.2" height="1.2"/><rect x="5.0" y="0" width="1.2" height="1.2"/><rect x="5.0" y="3" width="1.2" height="1.2"/><rect x="5.0" y="6" width="1.2" height="1.2"/><rect x="7.5" y="0" width="1.2" height="1.2"/><rect x="7.5" y="3" width="1.2" height="1.2"/><rect x="7.5" y="6" width="1.2" height="1.2"/></g></svg>
<svg style="left:1126px;top:714px" width="10" height="10"><path d="M1 1V9L9 5Z" fill="#222"/></svg>
<div class="t" style="left:1138px;top:712px;font-size:12.4px">Relations Extras</div>
<svg style="left:1328px;top:715px" width="11" height="8"><g fill="#c8c8c8"><rect x="0.0" y="0" width="1.2" height="1.2"/><rect x="0.0" y="3" width="1.2" height="1.2"/><rect x="0.0" y="6" width="1.2" height="1.2"/><rect x="2.5" y="0" width="1.2" height="1.2"/><rect x="2.5" y="3" width="1.2" height="1.2"/><rect x="2.5" y="6" width="1.2" height="1.2"/><rect x="5.0" y="0" width="1.2" height="1.2"/><rect x="5.0" y="3" width="1.2" height="1.2"/><rect x="5.0" y="6" width="1.2" height="1.2"/><rect x="7.5" y="0" width="1.2" height="1.2"/><rect x="7.5" y="3" width="1.2" height="1.2"/><rect x="7.5" y="6" width="1.2" height="1.2"/></g></svg>
<div class="a" style="left:1349px;top:667px;width:13px;height:57px;border-radius:6px;background:#626262;border:1px solid #4a4a4a"></div>
<div class="a" style="left:1350px;top:705px;width:11px;height:12px;border-radius:6px;background:#9a9a9a"></div>
<svg style="left:1113px;top:715px" width="13" height="13"><path d="M0 0L13 13M0 4L9 13M0 8L5 13" stroke="#ddd" stroke-width="1.2"/><path d="M0 1.5L11.5 13M0 5.5L7.5 13" stroke="#222" stroke-width=".8"/></svg>
<!-- taskbar -->
<div class="a" style="left:0;top:728px;width:1365px;height:39px;background:linear-gradient(90deg,#223a45 0%,#213944 40%,#1f3242 62%,#1d2d42 75%,#19273e 88%,#17233b 100%)"></div>
<div class="a" style="left:686px;top:728px;width:48px;height:39px;background:#3d515b"></div>
<div class="a" style="left:200px;top:765px;width:40px;height:2px;background:#76b9ed"></div>
<div class="a" style="left:298px;top:765px;width:40px;height:2px;background:#76b9ed"></div>
<div class="a" style="left:592px;top:765px;width:39px;height:2px;background:#76b9ed"></div>
<div class="a" style="left:641px;top:765px;width:39px;height:2px;background:#76b9ed"></div>
<div class="a" style="left:686px;top:765px;width:48px;height:2px;background:#76b9ed"></div>
<div class="a" style="left:739px;top:765px;width:39px;height:2px;background:#76b9ed"></div>
<svg style="left:16px;top:740px" width="17" height="17" viewBox="0 0 17 17"><path d="M0 2.3L7 1.3V8H0ZM8 1.1L17 0V8H8ZM0 9H7V15.7L0 14.7ZM8 9H17V17L8 15.9Z" fill="#fff"/></svg>
<svg style="left:63px;top:739px" width="19" height="19"><circle cx="11.5" cy="7.5" r="5.6" fill="none" stroke="#fff" stroke-width="1.4"/><path d="M7.6 11.4L1.5 17.5" stroke="#fff" stroke-width="1.5"/></svg>
<svg style="left:111px;top:739px" width="19" height="19"><path d="M1 2.5H12M1 16.5H12M2 5.5H11V13.5H2Z" stroke="#fff" stroke-width="1.3" fill="none"/><path d="M15.5 1.5V3.5M15.5 6V17.5" stroke="#fff" stroke-width="1.3"/></svg>
<svg style="left:159px;top:737px" width="23" height="23" viewBox="0 0 23 23"><path d="M11.5 1.5A10 10 0 1 1 6.5 20.2L1.2 21.8L2.8 16.7A10 10 0 0 1 11.5 1.5Z" fill="#fff"/><path d="M11.5 3.2A8.3 8.3 0 1 1 7 18.5L3.8 19.4L4.7 16.4A8.3 8.3 0 0 1 11.5 3.2Z" fill="#2fb84a"/><path d="M8.2 7.2C8.7 6.7 9.3 6.8 9.6 7.4L10.3 9C10.5 9.4 10.3 9.8 10 10.1C9.7 10.4 9.8 10.8 10.2 11.4C10.8 12.3 11.7 13 12.5 13.3C12.9 13.5 13.2 13.3 13.5 13C13.8 12.6 14.2 12.5 14.6 12.7L16 13.5C16.5 13.8 16.5 14.4 16.1 14.9C15.4 15.8 14.3 16.1 13 15.6C10.5 14.7 8.5 12.6 7.7 10.4C7.3 9.2 7.5 8 8.2 7.2Z" fill="#fff"/></svg>
<svg style="left:208px;top:737px" width="26" height="25" viewBox="0 0 26 25"><circle cx="11" cy="11" r="10.5" fill="#db4437"/><path d="M11 11L2 6A10.5 10.5 0 0 0 6 20Z" fill="#0f9d58"/><path d="M11 11L6 20A10.5 10.5 0 0 0 21.5 11Z" fill="#f4b400"/><path d="M11 11L2 6A10.5 10.5 0 0 0 6 20L11 11Z" fill="#0f9d58"/><circle cx="11" cy="11" r="5" fill="#fff"/><circle cx="11" cy="11" r="3.8" fill="#4285f4"/><circle cx="19" cy="18" r="6.5" fill="#6a5038"/><circle cx="18" cy="17" r="3" fill="#a08060"/></svg>
<svg style="left:257px;top:737px" width="23" height="24" viewBox="0 0 23 24"><path d="M6 2L20 4L17 22L3 20Z" fill="#d8ecf0" stroke="#9ab" stroke-width=".6"/><path d="M6 2L20 4L18 13C14 10 9 12 4 17Z" fill="#66b8d0"/><path d="M20 4L21 5L18 22L17 22Z" fill="#e0a040"/></svg>
<svg style="left:306px;top:738px" width="23" height="21" viewBox="0 0 23 21"><path d="M0.5 1H8L10 3H22.5V19H0.5Z" fill="#e8b830"/><path d="M0.5 5H22.5V19H0.5Z" fill="#ffd45a"/><path d="M7 13H16V20H13.5V15.5H9.5V20H7Z" fill="#2a78d0"/></svg>
<svg style="left:357px;top:736px" width="19" height="25" viewBox="0 0 19 25"><rect x=".5" y=".5" width="18" height="24" rx="1.5" fill="#5a6670" stroke="#888" stroke-width=".6"/><rect x="2.5" y="2.5" width="14" height="4" fill="#5ad0f0"/><g fill="#d8dde0"><rect x="2.5" y="8.5" width="4" height="4"/><rect x="7.5" y="8.5" width="4" height="4"/><rect x="12.5" y="8.5" width="4" height="4"/><rect x="2.5" y="13.5" width="4" height="4"/><rect x="7.5" y="13.5" width="4" height="4"/><rect x="2.5" y="18.5" width="4" height="4"/><rect x="7.5" y="18.5" width="4" height="4"/></g><rect x="12.5" y="13.5" width="4" height="9" fill="#1e4f9a"/></svg>
<svg style="left:405px;top:737px" width="22" height="22" viewBox="0 0 22 22"><rect x=".5" y=".5" width="21" height="21" fill="#061e26" stroke="#31c5f4" stroke-width="1.2"/><text x="3.5" y="16" font-family="Liberation Sans" font-size="12" font-weight="bold" fill="#31c5f4">Ps</text></svg>
<svg style="left:451px;top:735px" width="26" height="27" viewBox="0 0 26 27"><path d="M4 5L13 1L23 5V17L13 22L4 17Z" fill="#d52a1e"/><path d="M4 5L13 9L23 5L13 1Z" fill="#f06050"/><text x="5" y="16" font-family="Liberation Sans" font-size="9" font-weight="bold" fill="#fff">S</text><text x="14" y="15" font-family="Liberation Sans" font-size="9" font-weight="bold" fill="#fff">W</text><text x="4" y="25.5" font-family="Liberation Sans" font-size="8.5" font-weight="bold" fill="#fff" stroke="#000" stroke-width=".5">2021</text></svg>
<svg style="left:502px;top:737px" width="22" height="23" viewBox="0 0 22 23"><path d="M11 1L21 12C18 14 16 13 14 15L11 19L8 15C6 13 4 14 1 12Z" fill="#111" stroke="#ddd" stroke-width=".8"/><path d="M11 1L15 5.5C13 6 12 5 11 6.5C10 5 9 6 7 5.5Z" fill="#fff"/><ellipse cx="11" cy="21" rx="5" ry="1.5" fill="#222"/></svg>
<svg style="left:550px;top:736px" width="24" height="25" viewBox="0 0 24 25"><ellipse cx="12" cy="12.5" rx="11" ry="11.5" fill="#e5112a"/><ellipse cx="12" cy="12.5" rx="5" ry="8.5" fill="#203540"/></svg>
<svg style="left:599px;top:736px" width="24" height="24" viewBox="0 0 24 24"><rect x="2" y="2" width="20" height="14" fill="#d0d8dc" stroke="#889" stroke-width=".8"/><rect x="4" y="4" width="16" height="10" fill="#eef4f8"/><path d="M4 11L7 9L9 11L11 5L13 12L15 8L20 10" stroke="#3a8ad0" stroke-width="1" fill="none"/><ellipse cx="13" cy="21" rx="6" ry="2.5" fill="#c0c8cc"/><rect x="11" y="16" width="4" height="4" fill="#aab"/></svg>
<svg style="left:650px;top:739px" width="20" height="20" viewBox="0 0 20 20"><path d="M10 1L12 1L12.5 3.5A7 7 0 0 1 15 5L17.3 3.9L18.7 5.3L17.4 7.5A7 7 0 0 1 18.3 10L20 10.5V12.5L17.7 13A7 7 0 0 1 16.5 15.5L17.5 17.8L16 19.2L13.8 18A7 7 0 0 1 11 19L10.5 20H8.5L8 17.7A7 7 0 0 1 5.5 16.5L3.3 17.7L1.9 16.3L3 14A7 7 0 0 1 2 11.5L0 11V9L2.2 8.5A7 7 0 0 1 3.5 6L2.3 3.8L3.7 2.4L6 3.5A7 7 0 0 1 8.5 2.5Z" fill="#fff" transform="translate(-.5 -.5)"/><circle cx="9.5" cy="10" r="3.3" fill="#203540"/></svg>
<svg style="left:697px;top:738px" width="26" height="21" viewBox="0 0 16 14">
<path d="M1 8.5 L6.5 4.2 L3.8 4.2 L5 2.6 L9.5 2.6 C12.8 2.6 15.2 4.8 15.2 7.8 C15.2 10.9 12.7 13.2 9.6 13.2 C7.2 13.2 5.4 11.9 4.8 10.2 L2.4 12 C1.6 12.6 0.6 11.5 1.4 10.8 Z" fill="#f07f16"/>
<ellipse cx="9.7" cy="7.9" rx="3.7" ry="3.4" fill="#fff"/><ellipse cx="9.7" cy="7.9" rx="2" ry="1.9" fill="#275fa8"/></svg>
<svg style="left:748px;top:737px" width="22" height="22" viewBox="0 0 22 22"><rect x=".5" y=".5" width="21" height="21" fill="#061e26" stroke="#31c5f4" stroke-width="1.2"/><text x="3.5" y="16" font-family="Liberation Sans" font-size="12" font-weight="bold" fill="#31c5f4">Ps</text></svg>
<svg style="left:1032px;top:738px" width="22" height="20" viewBox="0 0 22 20"><path d="M11 1A9 9 0 1 0 20 13A7 7 0 0 1 11 1Z" fill="#ffc61a"/><ellipse cx="6" cy="5" rx="5" ry="3" fill="#a8d0e8"/></svg>
<div class="t" style="left:1063px;top:741px;font-size:13px;line-height:15px;color:#fff">26°C</div>
<div class="t" style="left:1101px;top:741px;font-size:13px;line-height:15px;color:#fff">Cerah</div>
<svg style="left:1152px;top:744px" width="14" height="9"><path d="M1 8L7 2L13 8" stroke="#fff" stroke-width="1.2" fill="none"/></svg>
<svg style="left:1175px;top:741px" width="17" height="13"><path d="M1 6.5H4M2.5 3.5V9.5" stroke="#fff" stroke-width="1.1"/><rect x="5" y="3" width="10.5" height="7.5" fill="none" stroke="#fff" stroke-width="1"/><rect x="6.5" y="4.5" width="7.5" height="4.5" fill="#fff"/><rect x="15.5" y="5" width="1.5" height="3.5" fill="#fff"/><path d="M1 3V10" stroke="#fff" stroke-width="1"/></svg>
<svg style="left:1198px;top:740px" width="18" height="16"><path d="M1 5.5H4L8 2V14L4 10.5H1Z" fill="none" stroke="#fff" stroke-width="1.1"/><path d="M10.5 5.5Q12 8 10.5 10.5M12.5 3.5Q15 8 12.5 12.5M14.5 1.5Q18 8 14.5 14.5" stroke="#fff" stroke-width="1.1" fill="none"/></svg>
<svg style="left:1226px;top:741px" width="14" height="14"><path d="M1.5 13A11.5 11.5 0 0 1 13 1.5M4.5 13A8.5 8.5 0 0 1 13 4.5M7.5 13A5.5 5.5 0 0 1 13 7.5" stroke="#fff" stroke-width="1.1" fill="none" opacity=".9"/><circle cx="12" cy="12" r="1.6" fill="#fff"/></svg>
<div class="t" style="left:1263px;top:733px;font-size:12px;line-height:14px;color:#fff;letter-spacing:-.2px">23:38</div>
<div class="t" style="left:1248px;top:750px;font-size:12px;line-height:14px;color:#fff;letter-spacing:-.2px">20/03/2022</div>
<svg style="left:1324px;top:738px" width="26" height="26" viewBox="0 0 26 26"><path d="M1 1H18V14H9L5 18V14H1Z" fill="#fff"/><path d="M4 5H15M4 8H15M4 11H11" stroke="#1a2a3e" stroke-width="1"/><circle cx="16.5" cy="16.8" r="8" fill="#2a2a2a" stroke="#17233b" stroke-width="1.2"/><circle cx="16.5" cy="16.8" r="7" fill="none" stroke="#555" stroke-width=".8"/><text x="13.5" y="21.5" font-family="Liberation Sans" font-size="12" fill="#fff">1</text></svg>
<div class="a" style="left:1364px;top:728px;width:1px;height:39px;background:#5a6a7a"></div>
</body></html>
